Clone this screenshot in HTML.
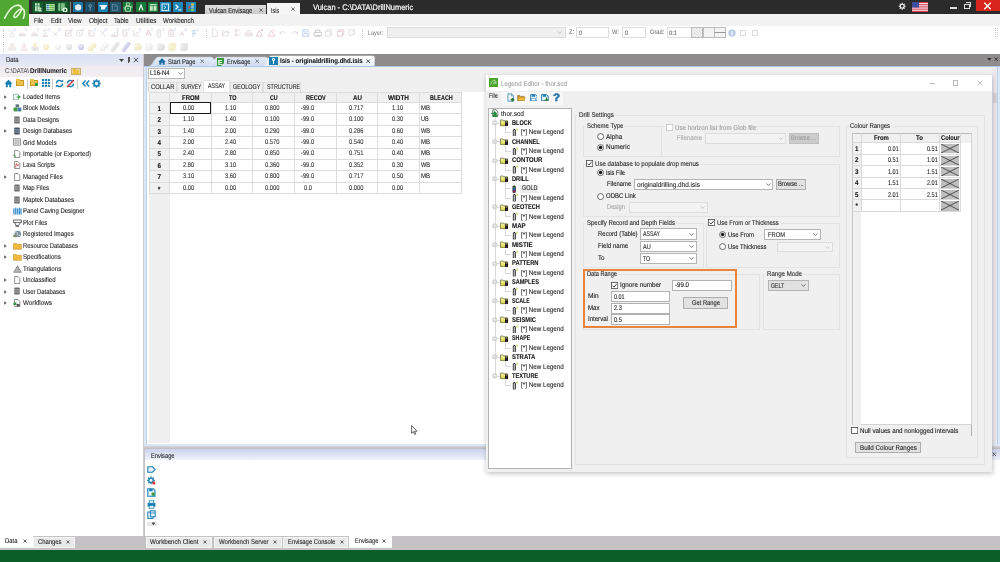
<!DOCTYPE html>
<html><head><meta charset="utf-8"><title>Vulcan - C:\DATA\DrillNumeric</title>
<style>
html,body{margin:0;padding:0;}
body{width:1000px;height:562px;overflow:hidden;background:#fff;position:relative;font-family:"Liberation Sans",sans-serif;font-size:6.2px;color:#222;text-rendering:geometricPrecision;}
div,svg{position:absolute;box-sizing:border-box;}
.t{white-space:nowrap;transform-origin:0 50%;-webkit-text-stroke:0.09px;}
#root{left:0;top:0;width:1000px;height:562px;overflow:hidden;will-change:transform;}
</style></head><body><div id="root">

<div style="left:0px;top:0px;width:1000px;height:14.3px;background:#2b2b2b;"></div>
<div style="left:0px;top:0px;width:28.8px;height:25.6px;background:#50a832;"></div>
<svg style="left:0px;top:0px;" width="29" height="26" viewBox="0 0 29 26"><path d="M4.6 18.2C8 11.2 13 5.4 17.4 5.2C20 5.1 21.4 6.6 22 8.4M23.4 18.3C25.2 13 24.8 8.8 21.8 8.8C18.8 8.8 13.9 14 13.9 16.5C13.9 17.9 15.5 17.8 17 16.4C19 14.5 20.9 11.8 21.5 9.8" fill="none" stroke="#e2fad6" stroke-width="1.65" stroke-linecap="round" stroke-linejoin="round"/></svg>
<div style="left:31.5px;top:1px;width:38px;height:12px;background:#124a26;"></div>
<div style="left:33px;top:1.6px;width:10.4px;height:10.6px;background:#155c2e;"></div>
<svg style="left:33px;top:1.6px;" width="10.4" height="10.6" viewBox="0 0 10.4 10.6"><rect x="2" y="1.2" width="4.6" height="8" fill="#bfe6c0"/><path d="M4.3 1.2v8M2 3.8h4.6" stroke="#155c2e" stroke-width=".6"/><circle cx="7.3" cy="6.6" r="1.2" fill="#bfe6c0"/><path d="M5.6 9.6c0-2 3.4-2 3.4 0z" fill="#bfe6c0"/></svg>
<div style="left:44.6px;top:1.6px;width:10.4px;height:10.6px;background:#155c2e;"></div>
<svg style="left:44.6px;top:1.6px;" width="10.4" height="10.6" viewBox="0 0 10.4 10.6"><rect x="1.2" y="2" width="8.4" height="6.8" fill="#d6f0d0"/><g fill="#2f78b8"><rect x="1.8" y="2.6" width="2" height="1.5"/><rect x="1.8" y="4.7" width="2" height="1.5"/><rect x="1.8" y="6.8" width="2" height="1.5"/></g><g fill="#6cc04a"><rect x="4.4" y="2.6" width="4.6" height="1.5"/><rect x="4.4" y="4.7" width="4.6" height="1.5"/><rect x="4.4" y="6.8" width="4.6" height="1.5"/></g></svg>
<div style="left:57px;top:1.6px;width:11.4px;height:10.6px;background:#155c2e;"></div>
<svg style="left:57px;top:1.6px;" width="11.4" height="10.6" viewBox="0 0 11.4 10.6"><rect x="1.2" y="1.2" width="6.6" height="7.6" fill="#7fbf8a"/><path d="M3.6 1.2v7.6" stroke="#155c2e" stroke-width=".6"/><circle cx="8" cy="8" r="1.9" fill="none" stroke="#e8f6e8" stroke-width="1.3"/></svg>
<div style="left:70px;top:2px;width:0.8px;height:10.5px;background:#8a8a8a;"></div>
<div style="left:72.7px;top:1.6px;width:10.4px;height:10.6px;background:#1a78a6;"></div>
<svg style="left:72.7px;top:1.6px;" width="10.4" height="10.6" viewBox="0 0 10.4 10.6"><path d="M5.2 2.2L8.2 3.6v3.6L5.2 8.8L2.2 7.2V3.6z" fill="#f0f4f6"/><path d="M2.2 3.6L5.2 5.2L8.2 3.6M5.2 5.2v3.6" stroke="#b9c6cf" stroke-width=".5" fill="none"/></svg>
<div style="left:85px;top:1.6px;width:10.4px;height:10.6px;background:#1d4f68;"></div>
<svg style="left:85px;top:1.6px;" width="10.4" height="10.6" viewBox="0 0 10.4 10.6"><circle cx="5.2" cy="3.8" r="1.3" fill="none" stroke="#7fa6ba" stroke-width=".8"/><path d="M5.2 5v3.6" stroke="#7fa6ba" stroke-width=".9"/></svg>
<div style="left:97.6px;top:1.6px;width:10.4px;height:10.6px;background:#1882b4;"></div>
<svg style="left:97.6px;top:1.6px;" width="10.4" height="10.6" viewBox="0 0 10.4 10.6"><path d="M1.6 3h7.4v1.6H8L6.6 7.4H3V4.6H1.6z" fill="#f4f8fa"/></svg>
<div style="left:110.4px;top:1.6px;width:10.4px;height:10.6px;background:#24566e;"></div>
<svg style="left:110.4px;top:1.6px;" width="10.4" height="10.6" viewBox="0 0 10.4 10.6"><path d="M2.4 2.4h3.2l1.8 1.8v4.2h-5z" fill="none" stroke="#6f93a6" stroke-width=".8"/><path d="M4.2 4.4h2.4" stroke="#6f93a6" stroke-width=".6"/></svg>
<div style="left:123px;top:1.6px;width:10.4px;height:10.6px;background:#177a38;"></div>
<svg style="left:123px;top:1.6px;" width="10.4" height="10.6" viewBox="0 0 10.4 10.6"><rect x="3.4" y="1" width="3.2" height="2.6" fill="none" stroke="#bfe6c0" stroke-width=".8"/><rect x="2.6" y="4.4" width="4.8" height="4.8" fill="none" stroke="#bfe6c0" stroke-width=".9"/><path d="M1.2 5v2.6M8.8 3.6v2.6M4 6.4h2" stroke="#bfe6c0" stroke-width=".8"/></svg>
<div style="left:135.5px;top:1.6px;width:10.4px;height:10.6px;background:#177a38;"></div>
<svg style="left:135.5px;top:1.6px;" width="10.4" height="10.6" viewBox="0 0 10.4 10.6"><path d="M3 8.4L5 3L7 8.4" fill="none" stroke="#fff" stroke-width="1.1"/></svg>
<div style="left:148px;top:1.6px;width:10.4px;height:10.6px;background:#177a38;"></div>
<svg style="left:148px;top:1.6px;" width="10.4" height="10.6" viewBox="0 0 10.4 10.6"><rect x="1.8" y="2" width="6.8" height="6.8" fill="#bfe6c0"/><path d="M5.2 3.4v5.4M1.8 3.6h6.8" stroke="#177a38" stroke-width=".7"/></svg>
<div style="left:160.2px;top:1.6px;width:10.6px;height:10.6px;background:#1d86b8;"></div>
<svg style="left:160.2px;top:1.6px;" width="10.6" height="10.6" viewBox="0 0 10.6 10.6"><rect x="2" y="2" width="6.6" height="6.6" fill="none" stroke="#f2f8fb" stroke-width=".9"/><path d="M4 3.8L5.8 5.3L4 6.8" fill="none" stroke="#f2f8fb" stroke-width=".8"/></svg>
<div style="left:173px;top:1.6px;width:10.4px;height:10.6px;background:#1d86b8;"></div>
<svg style="left:173px;top:1.6px;" width="10.4" height="10.6" viewBox="0 0 10.4 10.6"><path d="M2.6 2.8L5 5L2.6 7.2" fill="none" stroke="#fff" stroke-width="1.2"/><path d="M5.4 8h3" stroke="#fff" stroke-width="1"/></svg>
<div style="left:185.5px;top:1.6px;width:10.4px;height:10.6px;background:#1d86b8;"></div>
<svg style="left:185.5px;top:1.6px;" width="10.4" height="10.6" viewBox="0 0 10.4 10.6"><g><rect x="2.4" y="1.4" width="2.2" height="2.2" fill="#3e7fc4"/><rect x="5.2" y="1.4" width="2.6" height="2.2" fill="#e8c64a"/><rect x="2.4" y="4.2" width="2.2" height="2.2" fill="#d2504a"/><rect x="5.2" y="4.2" width="2.6" height="2.2" fill="#8fc7e0"/><rect x="2.4" y="7" width="2.2" height="2.2" fill="#3e9a52"/><rect x="5.2" y="7" width="2.6" height="2.2" fill="#7cc47a"/></g></svg>
<div style="left:204.7px;top:5px;width:61.8px;height:9.3px;background:linear-gradient(#dedede,#cbcbcb);"></div>
<div class="t" style="left:208.8px;top:6.10px;height:10px;line-height:10px;font-size:7.22px;color:#222;transform:scaleX(0.8072);">Vulcan Envisage</div>
<svg style="left:259.09999999999997px;top:7.9px;" width="4.2" height="4.2" viewBox="0 0 4.2 4.2"><path d="M0.5 0.5L3.7 3.7M3.7 0.5L0.5 3.7" stroke="#555" stroke-width="0.9"/></svg>
<div style="left:267px;top:3.2px;width:32.6px;height:11.1px;background:#f6f6f6;"></div>
<div class="t" style="left:270.9px;top:5.50px;height:10px;line-height:10px;font-size:7.22px;color:#222;transform:scaleX(0.7481);">Isis</div>
<svg style="left:291.29999999999995px;top:7.200000000000001px;" width="4.2" height="4.2" viewBox="0 0 4.2 4.2"><path d="M0.5 0.5L3.7 3.7M3.7 0.5L0.5 3.7" stroke="#555" stroke-width="0.9"/></svg>
<div class="t" style="left:312.8px;top:2.80px;height:10px;line-height:10px;font-size:8.1px;color:#f6f6f6;-webkit-text-stroke:0.22px #f6f6f6;transform:scaleX(0.9219);">Vulcan - C:\DATA\DrillNumeric</div>
<svg style="left:897.6px;top:2.2px;" width="8.4" height="8.4" viewBox="0 0 9 9"><circle cx="4.5" cy="4.5" r="2.1" fill="none" stroke="#f4f4f4" stroke-width="1.3"/><g stroke="#f4f4f4" stroke-width="1.2"><path d="M4.5 0.8v1.3M4.5 6.9v1.3M0.8 4.5h1.3M6.9 4.5h1.3M1.9 1.9l.9.9M6.2 6.2l.9.9M1.9 7.1l.9-.9M6.2 2.8l.9-.9"/></g></svg>
<svg style="left:912px;top:1.8px;" width="16" height="10" viewBox="0 0 16 10"><rect width="16" height="10" fill="#f4f4f4"/><g fill="#d8384a"><rect y="0" width="16" height="1.1"/><rect y="2.2" width="16" height="1.1"/><rect y="4.4" width="16" height="1.1"/><rect y="6.6" width="16" height="1.1"/><rect y="8.8" width="16" height="1.2"/></g><rect width="7" height="5.5" fill="#3b4f9c"/></svg>
<div style="left:949.5px;top:7.3px;width:7.2px;height:1.6px;background:#ddd;"></div>
<div style="left:964px;top:3.8px;width:5.5px;height:5px;border:1px solid #ddd;"></div>
<div style="left:965.8px;top:2.3px;width:5.5px;height:5px;border:1px solid #ddd;border-left:none;border-bottom:none;"></div>
<div style="left:975.5px;top:0px;width:24.5px;height:10.5px;background:#d9261c;"></div>
<svg style="left:983px;top:1.5px;" width="9" height="8" viewBox="0 0 9 8"><path d="M1.3 0.8L7.7 7.2M7.7 0.8L1.3 7.2" stroke="#fff" stroke-width="1.3"/></svg>
<div style="left:28.8px;top:14.2px;width:971.2px;height:11.4px;background:#f2f2f2;"></div>
<div class="t" style="left:33.75px;top:16.30px;height:10px;line-height:10px;font-size:7.22px;color:#1a1a1a;transform:scaleX(0.8032);">File</div>
<div class="t" style="left:50.6px;top:16.30px;height:10px;line-height:10px;font-size:7.22px;color:#1a1a1a;transform:scaleX(0.8351);">Edit</div>
<div class="t" style="left:68px;top:16.30px;height:10px;line-height:10px;font-size:7.22px;color:#1a1a1a;transform:scaleX(0.8692);">View</div>
<div class="t" style="left:88.5px;top:16.30px;height:10px;line-height:10px;font-size:7.22px;color:#1a1a1a;transform:scaleX(0.8862);">Object</div>
<div class="t" style="left:113.8px;top:16.30px;height:10px;line-height:10px;font-size:7.22px;color:#1a1a1a;transform:scaleX(0.8456);">Table</div>
<div class="t" style="left:135.5px;top:16.30px;height:10px;line-height:10px;font-size:7.22px;color:#1a1a1a;transform:scaleX(0.8811);">Utilities</div>
<div class="t" style="left:163px;top:16.30px;height:10px;line-height:10px;font-size:7.22px;color:#1a1a1a;transform:scaleX(0.8519);">Workbench</div>
<div style="left:0px;top:26px;width:1000px;height:28px;background:#fff;"></div>
<div style="left:3px;top:28.5px;width:1px;height:1px;background:#bdbdbd;"></div>
<div style="left:3px;top:30.7px;width:1px;height:1px;background:#bdbdbd;"></div>
<div style="left:3px;top:32.9px;width:1px;height:1px;background:#bdbdbd;"></div>
<div style="left:3px;top:35.1px;width:1px;height:1px;background:#bdbdbd;"></div>
<div style="left:3px;top:37.3px;width:1px;height:1px;background:#bdbdbd;"></div>
<div style="left:3px;top:42.0px;width:1px;height:1px;background:#bdbdbd;"></div>
<div style="left:3px;top:44.2px;width:1px;height:1px;background:#bdbdbd;"></div>
<div style="left:3px;top:46.4px;width:1px;height:1px;background:#bdbdbd;"></div>
<div style="left:3px;top:48.6px;width:1px;height:1px;background:#bdbdbd;"></div>
<div style="left:3px;top:50.8px;width:1px;height:1px;background:#bdbdbd;"></div>
<svg style="left:6.8px;top:28.0px;" width="9.6" height="9.2" viewBox="0 0 9.6 9.2"><g fill="none" stroke="#e1d5dc" stroke-width=".8"><path d="M1.5 1.5L7 7.5M7 2L2 7.8M3 8.6h3.6"/></g><circle cx="8" cy="1.6" r="1.2" fill="none" stroke="#d3d8f0" stroke-width=".6"/></svg>
<svg style="left:18.22px;top:28.0px;" width="9.6" height="9.2" viewBox="0 0 9.6 9.2"><g fill="none" stroke="#e1d5dc" stroke-width=".8"><path d="M1 7.8h7M2 7.8V5.6M4 7.8V4.6M6 7.8V5.6M1 6.4h7"/></g><circle cx="8" cy="1.6" r="1.2" fill="none" stroke="#d3d8f0" stroke-width=".6"/></svg>
<svg style="left:29.639999999999997px;top:28.0px;" width="9.6" height="9.2" viewBox="0 0 9.6 9.2"><g fill="none" stroke="#e1d5dc" stroke-width=".8"><path d="M1 7.8h7M1.5 6.4L4 4.2L6.6 6.4M1 6.6h7"/></g><circle cx="8" cy="1.6" r="1.2" fill="none" stroke="#d3d8f0" stroke-width=".6"/></svg>
<svg style="left:41.06px;top:28.0px;" width="9.6" height="9.2" viewBox="0 0 9.6 9.2"><g fill="none" stroke="#e1d5dc" stroke-width=".8"><path d="M6.4 2.2H2.4L4.6 4.8L2.4 7.4H6.6M1.6 8.6h5.6"/></g><circle cx="8" cy="1.6" r="1.2" fill="none" stroke="#d3d8f0" stroke-width=".6"/></svg>
<svg style="left:52.480000000000004px;top:28.0px;" width="9.6" height="9.2" viewBox="0 0 9.6 9.2"><g fill="none" stroke="#e1d5dc" stroke-width=".8"><path d="M1.6 4L5 8M5 4L1.6 8M5.8 3.4L7 2.2"/></g><circle cx="8" cy="1.6" r="1.2" fill="none" stroke="#d3d8f0" stroke-width=".6"/></svg>
<svg style="left:63.900000000000006px;top:28.0px;" width="9.6" height="9.2" viewBox="0 0 9.6 9.2"><g fill="none" stroke="#e1d5dc" stroke-width=".8"><rect x="1.6" y="2.6" width="5.4" height="5.4"/><path d="M1.6 8L7 2.6M3 5.4h2.6"/></g><circle cx="8" cy="1.6" r="1.2" fill="none" stroke="#d3d8f0" stroke-width=".6"/></svg>
<svg style="left:75.32px;top:28.0px;" width="9.6" height="9.2" viewBox="0 0 9.6 9.2"><g fill="none" stroke="#e1d5dc" stroke-width=".8"><circle cx="4.4" cy="5.2" r="3"/><circle cx="4.4" cy="5.2" r=".7"/><path d="M6.4 3L7.6 1.8"/></g><circle cx="8" cy="1.6" r="1.2" fill="none" stroke="#d3d8f0" stroke-width=".6"/></svg>
<svg style="left:86.74px;top:28.0px;" width="9.6" height="9.2" viewBox="0 0 9.6 9.2"><g fill="none" stroke="#e1d5dc" stroke-width=".8"><path d="M1.8 8V2.4C5.4 2.4 7.4 4.6 7.4 8zM1.8 5.2C3.8 5.2 4.8 6.2 4.8 8"/></g><circle cx="8" cy="1.6" r="1.2" fill="none" stroke="#d3d8f0" stroke-width=".6"/></svg>
<svg style="left:98.16px;top:28.0px;" width="9.6" height="9.2" viewBox="0 0 9.6 9.2"><g fill="none" stroke="#e1d5dc" stroke-width=".8"><path d="M1.4 2L7.6 8.4M7.6 2L3.4 6.4"/></g><circle cx="8" cy="1.6" r="1.2" fill="none" stroke="#d3d8f0" stroke-width=".6"/></svg>
<svg style="left:109.58px;top:28.0px;" width="9.6" height="9.2" viewBox="0 0 9.6 9.2"><g fill="none" stroke="#e1d5dc" stroke-width=".8"><path d="M1.2 8L7.4 3.2V8zM1.2 8h6.2M3 8.8h4"/></g><circle cx="8" cy="1.6" r="1.2" fill="none" stroke="#d3d8f0" stroke-width=".6"/></svg>
<svg style="left:121.0px;top:28.0px;" width="9.6" height="9.2" viewBox="0 0 9.6 9.2"><g fill="none" stroke="#e1d5dc" stroke-width=".8"><path d="M1.8 1.8h3.4v6.4H1.8zM3 3v.8M3 5v.8M6 4.4c1.2 0 1.6 1.2.4 2v1.2"/></g><circle cx="8" cy="1.6" r="1.2" fill="none" stroke="#d3d8f0" stroke-width=".6"/></svg>
<svg style="left:132.42px;top:28.0px;" width="9.6" height="9.2" viewBox="0 0 9.6 9.2"><g fill="none" stroke="#e1d5dc" stroke-width=".8"><path d="M1.8 1.8V8H7.6M3 6.6L4.4 4.4L5.4 6.2L7 3.6"/></g><circle cx="8" cy="1.6" r="1.2" fill="none" stroke="#d3d8f0" stroke-width=".6"/></svg>
<svg style="left:143.83999999999997px;top:28.0px;" width="9.6" height="9.2" viewBox="0 0 9.6 9.2"><g fill="none" stroke="#e1d5dc" stroke-width=".8"><path d="M1.6 8.2L4.4 1.8L7.2 8.2M2.6 6h3.6" stroke="#e2c2cc"/></g><circle cx="8" cy="1.6" r="1.2" fill="none" stroke="#d3d8f0" stroke-width=".6"/></svg>
<svg style="left:155.26px;top:28.0px;" width="9.6" height="9.2" viewBox="0 0 9.6 9.2"><g fill="none" stroke="#e1d5dc" stroke-width=".8"><path d="M2.2 1.8h3.2v6.6H2.2zM3.2 3.4h1.2M3.2 5h1.2"/></g><circle cx="8" cy="1.6" r="1.2" fill="none" stroke="#d3d8f0" stroke-width=".6"/></svg>
<svg style="left:166.67999999999998px;top:28.0px;" width="9.6" height="9.2" viewBox="0 0 9.6 9.2"><g fill="none" stroke="#e1d5dc" stroke-width=".8"><path d="M1.8 2.2h4.4v6.2H1.8zM2.8 3.8h2.4M2.8 5.2h2.4M2.8 6.6h2.4M2.6 1.6h2.8"/></g><circle cx="8" cy="1.6" r="1.2" fill="none" stroke="#d3d8f0" stroke-width=".6"/></svg>
<svg style="left:178.1px;top:28.0px;" width="9.6" height="9.2" viewBox="0 0 9.6 9.2"><g fill="none" stroke="#e1d5dc" stroke-width=".8"><path d="M2 8L4 3.6L6 8M2.8 6.4h2.4M6.6 3.2L7.6 2"/></g><circle cx="8" cy="1.6" r="1.2" fill="none" stroke="#d3d8f0" stroke-width=".6"/></svg>
<svg style="left:189.51999999999998px;top:28.0px;" width="9.6" height="9.2" viewBox="0 0 9.6 9.2"><g fill="none" stroke="#e1d5dc" stroke-width=".8"><path d="M3 8.4V2.8h3.8M3 5.4h3" stroke="#bdd0ea" stroke-width="1.1"/></g><circle cx="8" cy="1.6" r="1.2" fill="none" stroke="#d3d8f0" stroke-width=".6"/></svg>
<div style="left:205.6px;top:28.5px;width:1px;height:1px;background:#c9c9c9;"></div>
<div style="left:205.6px;top:30.7px;width:1px;height:1px;background:#c9c9c9;"></div>
<div style="left:205.6px;top:32.9px;width:1px;height:1px;background:#c9c9c9;"></div>
<div style="left:205.6px;top:35.1px;width:1px;height:1px;background:#c9c9c9;"></div>
<div style="left:205.6px;top:37.3px;width:1px;height:1px;background:#c9c9c9;"></div>
<svg style="left:209.6px;top:27.799999999999997px;" width="9.6" height="9.2" viewBox="0 0 9.6 9.2"><g fill="none" stroke="#e1d5dc" stroke-width=".8"><path d="M2.4 1.2h3l1.8 1.8v5.6H2.4z"/></g></svg>
<svg style="left:221.04999999999998px;top:27.799999999999997px;" width="9.6" height="9.2" viewBox="0 0 9.6 9.2"><g fill="none" stroke="#e1d5dc" stroke-width=".8"><path d="M1.2 8V2.6h2.4l.8.9h3v1.3M1.2 8L2.8 4.8h5.6L6.8 8z"/></g></svg>
<svg style="left:232.5px;top:27.799999999999997px;" width="9.6" height="9.2" viewBox="0 0 9.6 9.2"><g fill="none" stroke="#e1d5dc" stroke-width=".8"><path d="M2 1.4h2.2v2H2zM2 6h2.2v2H2zM3 3.4V6M5.6 2.4h1.6M5.6 7h1.6M7.2 4.2v1.4"/></g></svg>
<svg style="left:243.95px;top:27.799999999999997px;" width="9.6" height="9.2" viewBox="0 0 9.6 9.2"><g fill="none" stroke="#e1d5dc" stroke-width=".8"><path d="M1.2 5.2h7v2.8h-7zM2.4 5.2L3.4 2.8h3.2l.6 2.4M1.2 6.6h7"/></g></svg>
<svg style="left:255.39999999999998px;top:27.799999999999997px;" width="9.6" height="9.2" viewBox="0 0 9.6 9.2"><g fill="none" stroke="#e4c4cc" stroke-width=".8"><path d="M1.2 8.2L4.4 2.4L7.6 8.2z"/><path d="M6 1L8 3M8 1L6 3" stroke="#e8b9bf"/></g></svg>
<svg style="left:266.84999999999997px;top:27.799999999999997px;" width="9.6" height="9.2" viewBox="0 0 9.6 9.2"><g fill="none" stroke="#e4c4cc" stroke-width=".8"><path d="M1.2 8.2L4.4 2.4L7.6 8.2z"/><path d="M7 1.4v1.8" stroke="#e8b9bf"/></g></svg>
<svg style="left:278.3px;top:27.799999999999997px;" width="9.6" height="9.2" viewBox="0 0 9.6 9.2"><g fill="none" stroke="#e1d5dc" stroke-width=".8"><path d="M2 5.6C2.4 3 6.4 2.6 7.4 5.8M2 5.6V3.4M2 5.6h2.2"/></g></svg>
<svg style="left:289.75px;top:27.799999999999997px;" width="9.6" height="9.2" viewBox="0 0 9.6 9.2"><g fill="none" stroke="#e1d5dc" stroke-width=".8"><path d="M7.4 5.6C7 3 3 2.6 2 5.8M7.4 5.6V3.4M7.4 5.6H5.2"/></g></svg>
<svg style="left:301.2px;top:27.799999999999997px;" width="9.6" height="9.2" viewBox="0 0 9.6 9.2"><g fill="none" stroke="#c3d0ea" stroke-width=".8"><path d="M1.6 1.6h5.2l1 1v5.8H1.6zM3 1.6v2.4h3V1.6M2.8 8.4V5.6h3.6v2.8" stroke="#c3d0ea" stroke-width=".8"/></g></svg>
<svg style="left:312.65px;top:27.799999999999997px;" width="9.6" height="9.2" viewBox="0 0 9.6 9.2"><g fill="none" stroke="#ccc" stroke-width=".8"><path d="M1 4.4h7.6v3h-7.6zM2.6 4.4V2.2h4.4v2.2M2.6 7.4v1.2h4.4V7.4" stroke="#cdcdcd" stroke-width="1"/></g></svg>
<svg style="left:324.09999999999997px;top:27.799999999999997px;" width="9.6" height="9.2" viewBox="0 0 9.6 9.2"><g fill="none" stroke="#e1d5dc" stroke-width=".8"><path d="M1.4 3.4h4.8v4.8H1.4zM3 3.4V1.8h4.8v4.8H6.2"/></g></svg>
<svg style="left:335.55px;top:27.799999999999997px;" width="9.6" height="9.2" viewBox="0 0 9.6 9.2"><g fill="none" stroke="#e1d5dc" stroke-width=".8"><path d="M1.4 3.4h4.8v4.8H1.4zM3 3.4V1.8h4.8v4.8H6.2" stroke="#e0c4cc"/></g></svg>
<svg style="left:346.99999999999994px;top:27.799999999999997px;" width="9.6" height="9.2" viewBox="0 0 9.6 9.2"><g fill="none" stroke="#e1d5dc" stroke-width=".8"><path d="M1.8 1.6h5.6v5H5L3.6 8.2V6.6H1.8zM4.6 2.8c1.2 0 1.2 1.2 0 1.8v.6"/></g></svg>
<div style="left:362px;top:28.5px;width:1px;height:1px;background:#c9c9c9;"></div>
<div style="left:362px;top:30.7px;width:1px;height:1px;background:#c9c9c9;"></div>
<div style="left:362px;top:32.9px;width:1px;height:1px;background:#c9c9c9;"></div>
<div style="left:362px;top:35.1px;width:1px;height:1px;background:#c9c9c9;"></div>
<div style="left:362px;top:37.3px;width:1px;height:1px;background:#c9c9c9;"></div>
<div class="t" style="left:368.4px;top:28.50px;height:10px;line-height:10px;font-size:6.66px;color:#8f8a92;transform:scaleX(0.8216);">Layer:</div>
<div style="left:387px;top:27px;width:178.5px;height:10.5px;background:#efefef;border:1px solid #dcdcdc;"></div>
<svg style="left:557px;top:31px;" width="5" height="3" viewBox="0 0 5 3"><path d="M0.5 0.5L2.5 2.3L4.5 0.5" stroke="#aaa" fill="none" stroke-width=".7"/></svg>
<div class="t" style="left:569.3px;top:28.40px;height:10px;line-height:10px;font-size:6.44px;color:#777;transform:scaleX(0.885);transform-origin:0 50%;">Z:</div>
<div style="left:576px;top:27px;width:33px;height:10.5px;background:#fff;border:1px solid #ddd;"></div>
<div class="t" style="left:578.5px;top:28.60px;height:10px;line-height:10px;font-size:6.44px;color:#666;transform:scaleX(0.885);transform-origin:0 50%;">0</div>
<div class="t" style="left:612px;top:28.40px;height:10px;line-height:10px;font-size:6.44px;color:#777;transform:scaleX(0.885);transform-origin:0 50%;">W:</div>
<div style="left:622px;top:27px;width:24px;height:10.5px;background:#fff;border:1px solid #ddd;"></div>
<div class="t" style="left:624.5px;top:28.60px;height:10px;line-height:10px;font-size:6.44px;color:#666;transform:scaleX(0.885);transform-origin:0 50%;">0</div>
<div class="t" style="left:650px;top:28.40px;height:10px;line-height:10px;font-size:6.44px;color:#777;transform:scaleX(0.885);transform-origin:0 50%;">Grad:</div>
<div style="left:667px;top:27px;width:24.5px;height:10.5px;background:#fff;border:1px solid #ddd;"></div>
<div class="t" style="left:669px;top:28.60px;height:10px;line-height:10px;font-size:6.44px;color:#666;transform:scaleX(0.885);transform-origin:0 50%;">0:1</div>
<div style="left:691px;top:27px;width:12px;height:10.5px;background:repeating-linear-gradient(45deg,#d9d9d9 0 1px,#f2f2f2 1px 2.2px);border:1px solid #bbb;"></div>
<div style="left:702.5px;top:27px;width:12px;height:10.5px;background:#f4f4f4;border:1px solid #bbb;"></div>
<div style="left:714px;top:27px;width:12px;height:10.5px;background:#f4f4f4;border:1px solid #bbb;"></div>
<div style="left:714px;top:32px;width:12px;height:0.8px;background:#999;"></div>
<svg style="left:728px;top:28.5px;" width="8" height="8" viewBox="0 0 8 8"><circle cx="4" cy="4" r="3.7" fill="#b9cbe6"/><rect x="3.4" y="3.2" width="1.2" height="3" fill="#fff"/><rect x="3.4" y="1.6" width="1.2" height="1.1" fill="#fff"/></svg>
<div style="left:740px;top:29.5px;width:6px;height:6px;border:1px solid #e2d9de;"></div>
<div style="left:751.5px;top:29.5px;width:6px;height:6px;border:1px solid #e2d9de;"></div>
<div style="left:995px;top:28px;width:1px;height:1px;background:#ccc;"></div>
<div style="left:997px;top:28px;width:1px;height:1px;background:#ccc;"></div>
<div style="left:995px;top:30px;width:1px;height:1px;background:#ccc;"></div>
<div style="left:997px;top:30px;width:1px;height:1px;background:#ccc;"></div>
<div style="left:995px;top:32px;width:1px;height:1px;background:#ccc;"></div>
<div style="left:997px;top:32px;width:1px;height:1px;background:#ccc;"></div>
<div style="left:995px;top:34px;width:1px;height:1px;background:#ccc;"></div>
<div style="left:997px;top:34px;width:1px;height:1px;background:#ccc;"></div>
<div style="left:995px;top:36px;width:1px;height:1px;background:#ccc;"></div>
<div style="left:997px;top:36px;width:1px;height:1px;background:#ccc;"></div>
<svg style="left:7px;top:41.5px;opacity:.72;" width="10" height="10" viewBox="0 0 10 10"><radialGradient id="a1" cx=".38" cy=".32" r=".75"><stop offset="0" stop-color="#f6f2ee"/><stop offset="1" stop-color="#d9d0cc"/></radialGradient><circle cx="5" cy="3" r="2.2" fill="url(#a1)"/><radialGradient id="a2" cx=".38" cy=".32" r=".75"><stop offset="0" stop-color="#f6f2ee"/><stop offset="1" stop-color="#d9d0cc"/></radialGradient><circle cx="3" cy="6.6" r="2.2" fill="url(#a2)"/><radialGradient id="a3" cx=".38" cy=".32" r=".75"><stop offset="0" stop-color="#f6f2ee"/><stop offset="1" stop-color="#d9d0cc"/></radialGradient><circle cx="7" cy="6.6" r="2.2" fill="url(#a3)"/></svg>
<svg style="left:18.6px;top:41.5px;opacity:.72;" width="10" height="10" viewBox="0 0 10 10"><path d="M5 1L8.6 8.6H1.4z" fill="#f6ecee" stroke="#e6d2d8" stroke-width=".6"/><path d="M5 1v7.6" stroke="#e6d2d8" stroke-width=".5"/></svg>
<svg style="left:30px;top:41.5px;opacity:.72;" width="10" height="10" viewBox="0 0 10 10"><rect x="1.4" y="4.6" width="7.4" height="4.2" fill="#e6e0e2"/><rect x="3.2" y="1" width="3.6" height="4" fill="#f3ecc4"/><rect x="4" y="5.8" width="2" height="3" fill="#d6cfd3"/></svg>
<svg style="left:41.4px;top:41.5px;opacity:.72;" width="10" height="10" viewBox="0 0 10 10"><radialGradient id="b0" cx=".38" cy=".32" r=".75"><stop offset="0" stop-color="#fbf7dc"/><stop offset="1" stop-color="#e9df9e"/></radialGradient><circle cx="5" cy="5" r="3.1" fill="url(#b0)"/></svg>
<svg style="left:53px;top:41.5px;opacity:.72;" width="10" height="10" viewBox="0 0 10 10"><radialGradient id="b1" cx=".38" cy=".32" r=".75"><stop offset="0" stop-color="#ffffff"/><stop offset="1" stop-color="#dcdae2"/></radialGradient><circle cx="5" cy="5" r="3.1" fill="url(#b1)"/></svg>
<svg style="left:64.4px;top:41.5px;opacity:.72;" width="10" height="10" viewBox="0 0 10 10"><radialGradient id="b2" cx=".38" cy=".32" r=".75"><stop offset="0" stop-color="#f0f0f0"/><stop offset="1" stop-color="#c9c9cc"/></radialGradient><circle cx="5" cy="5" r="3.1" fill="url(#b2)"/></svg>
<svg style="left:75.6px;top:41.5px;opacity:.72;" width="10" height="10" viewBox="0 0 10 10"><radialGradient id="b3" cx=".38" cy=".32" r=".75"><stop offset="0" stop-color="#e2e2f6"/><stop offset="1" stop-color="#a9a9dc"/></radialGradient><circle cx="5" cy="5" r="3.1" fill="url(#b3)"/></svg>
<svg style="left:87px;top:41.5px;opacity:.72;" width="10" height="10" viewBox="0 0 10 10"><radialGradient id="c0a" cx=".38" cy=".32" r=".75"><stop offset="0" stop-color="#fbf7dc"/><stop offset="1" stop-color="#e9df9e"/></radialGradient><circle cx="6.6" cy="3.4" r="2.7" fill="url(#c0a)"/><radialGradient id="c0b" cx=".38" cy=".32" r=".75"><stop offset="0" stop-color="#fbf7dc"/><stop offset="1" stop-color="#e9df9e"/></radialGradient><circle cx="3.6" cy="6.4" r="2.9" fill="url(#c0b)"/></svg>
<svg style="left:98.6px;top:41.5px;opacity:.72;" width="10" height="10" viewBox="0 0 10 10"><radialGradient id="c1a" cx=".38" cy=".32" r=".75"><stop offset="0" stop-color="#ffffff"/><stop offset="1" stop-color="#dcdae2"/></radialGradient><circle cx="6.6" cy="3.4" r="2.7" fill="url(#c1a)"/><radialGradient id="c1b" cx=".38" cy=".32" r=".75"><stop offset="0" stop-color="#ffffff"/><stop offset="1" stop-color="#dcdae2"/></radialGradient><circle cx="3.6" cy="6.4" r="2.9" fill="url(#c1b)"/></svg>
<svg style="left:110px;top:41.5px;opacity:.72;" width="10" height="10" viewBox="0 0 10 10"><linearGradient id="d0" x1="0" y1="0" x2="1" y2="1"><stop offset="0" stop-color="#f0f0f0"/><stop offset="1" stop-color="#c9c9cc"/></linearGradient><path d="M2.6 8.2L7.4 1.8" stroke="url(#d0)" stroke-width="4.2" stroke-linecap="round"/></svg>
<svg style="left:121.4px;top:41.5px;opacity:.72;" width="10" height="10" viewBox="0 0 10 10"><linearGradient id="d1" x1="0" y1="0" x2="1" y2="1"><stop offset="0" stop-color="#e2e2f6"/><stop offset="1" stop-color="#a9a9dc"/></linearGradient><path d="M2.6 8.2L7.4 1.8" stroke="url(#d1)" stroke-width="4.2" stroke-linecap="round"/></svg>
<svg style="left:133px;top:41.5px;opacity:.72;" width="10" height="10" viewBox="0 0 10 10"><linearGradient id="e0" x1="0" y1="0" x2="1" y2="1"><stop offset="0" stop-color="#fbf7dc"/><stop offset="1" stop-color="#e9df9e"/></linearGradient><path d="M1.4 1.6h4.4c2 .4 3.2 2 3.2 3.6s-1.4 3.2-3.4 3.4H1.4z" fill="url(#e0)" stroke="#e0dcd8" stroke-width=".4"/></svg>
<svg style="left:144px;top:41.5px;opacity:.72;" width="10" height="10" viewBox="0 0 10 10"><linearGradient id="e1" x1="0" y1="0" x2="1" y2="1"><stop offset="0" stop-color="#ffffff"/><stop offset="1" stop-color="#dcdae2"/></linearGradient><path d="M1.4 1.6h4.4c2 .4 3.2 2 3.2 3.6s-1.4 3.2-3.4 3.4H1.4z" fill="url(#e1)" stroke="#e0dcd8" stroke-width=".4"/></svg>
<svg style="left:155.6px;top:41.5px;opacity:.72;" width="10" height="10" viewBox="0 0 10 10"><linearGradient id="e2" x1="0" y1="0" x2="1" y2="1"><stop offset="0" stop-color="#f0f0f0"/><stop offset="1" stop-color="#c9c9cc"/></linearGradient><path d="M1.4 1.6h4.4c2 .4 3.2 2 3.2 3.6s-1.4 3.2-3.4 3.4H1.4z" fill="url(#e2)" stroke="#e0dcd8" stroke-width=".4"/></svg>
<svg style="left:167px;top:41.5px;opacity:.72;" width="10" height="10" viewBox="0 0 10 10"><linearGradient id="f0" x1="0" y1="0" x2="1" y2="1"><stop offset="0" stop-color="#fbf7dc"/><stop offset="1" stop-color="#e9df9e"/></linearGradient><path d="M1.2 3h6v6h-6z" fill="url(#f0)"/><path d="M1.2 3L3 1.2h6L7.2 3zM7.2 3L9 1.2v6L7.2 9z" fill="#e9df9e" opacity=".75"/></svg>
<svg style="left:178.6px;top:41.5px;opacity:.72;" width="10" height="10" viewBox="0 0 10 10"><linearGradient id="f1" x1="0" y1="0" x2="1" y2="1"><stop offset="0" stop-color="#f0f0f0"/><stop offset="1" stop-color="#c9c9cc"/></linearGradient><path d="M1.2 3h6v6h-6z" fill="url(#f1)"/><path d="M1.2 3L3 1.2h6L7.2 3zM7.2 3L9 1.2v6L7.2 9z" fill="#c9c9cc" opacity=".75"/></svg>
<div style="left:0px;top:54px;width:142.7px;height:12px;background:linear-gradient(#d9e0f2,#e6eaf6);"></div>
<div class="t" style="left:6px;top:56.40px;height:10px;line-height:10px;font-size:6.99px;color:#222;transform:scaleX(0.8398);">Data</div>
<svg style="left:118.5px;top:58.5px;" width="5" height="3" viewBox="0 0 5 3"><path d="M0 0h5l-2.5 3z" fill="#444"/></svg>
<div style="left:127.5px;top:57px;width:2px;height:4.5px;border:0.8px solid #555;"></div>
<div style="left:128.2px;top:61.3px;width:0.7px;height:1.6px;background:#555;"></div>
<svg style="left:133px;top:57.2px;" width="6" height="6" viewBox="0 0 6 6"><path d="M0.8 0.8L5.2 5.2M5.2 0.8L0.8 5.2" stroke="#444" stroke-width=".9"/></svg>
<div style="left:0px;top:66px;width:142.7px;height:11px;background:linear-gradient(#eeeaee,#f3f0f2);"></div>
<div class="t" style="left:5.2px;top:67.30px;height:10px;line-height:10px;font-size:6.99px;color:#555;transform:scaleX(0.8430);">C:\DATA\</div>
<div class="t" style="left:29.8px;top:67.30px;height:10px;line-height:10px;font-size:6.99px;color:#222;font-weight:bold;transform:scaleX(0.8885);">DrillNumeric</div>
<div style="left:71.2px;top:67.6px;width:9.8px;height:7.4px;background:#e9d9a0;border:1px solid #c5b26a;"></div>
<div style="left:73px;top:70.2px;width:6px;height:3.6px;background:#f0bd3c;"></div>
<div style="left:73px;top:69.2px;width:2.6px;height:1.2px;background:#f0bd3c;"></div>
<div style="left:0px;top:77px;width:142.7px;height:459px;background:#fff;"></div>
<svg style="left:4px;top:78.5px;" width="9" height="9" viewBox="0 0 9 9"><path d="M4.5 0.8L0.5 4.5h1.3v3.7h2v-2.4h1.4v2.4h2V4.5h1.3z" fill="#1b7fb3"/></svg>
<div style="left:16px;top:80px;width:8px;height:6px;background:#eec14a;border:0.7px solid #c79a28;"></div>
<div style="left:16px;top:79px;width:3.5px;height:1.6px;background:#eec14a;"></div>
<div style="left:26.6px;top:78.5px;width:0.7px;height:10px;background:#ccc;"></div>
<div style="left:30px;top:80px;width:8px;height:6px;background:#eec14a;border:0.7px solid #c79a28;"></div>
<div style="left:30px;top:79px;width:3.5px;height:1.6px;background:#eec14a;"></div>
<div style="left:35px;top:83.2px;width:3.2px;height:3.2px;background:#3d9a42;"></div>
<svg style="left:41.5px;top:78.8px;" width="8" height="8" viewBox="0 0 8 8"><g fill="#1b7fb3"><rect x="0" y="0" width="2.1" height="2.1"/><rect x="2.9" y="0" width="2.1" height="2.1"/><rect x="5.8" y="0" width="2.1" height="2.1"/><rect x="0" y="2.9" width="2.1" height="2.1"/><rect x="2.9" y="2.9" width="2.1" height="2.1"/><rect x="5.8" y="2.9" width="2.1" height="2.1"/><rect x="0" y="5.8" width="2.1" height="2.1"/><rect x="2.9" y="5.8" width="2.1" height="2.1"/><rect x="5.8" y="5.8" width="2.1" height="2.1"/></g></svg>
<div style="left:52.3px;top:78.5px;width:0.7px;height:10px;background:#ccc;"></div>
<svg style="left:55px;top:78.8px;" width="9" height="9" viewBox="0 0 9 9"><path d="M1.4 4.5a3.1 3.1 0 0 1 5.6-1.8M7.6 4.5a3.1 3.1 0 0 1-5.6 1.8" fill="none" stroke="#1b7fb3" stroke-width="1.5"/><path d="M5.6 3.1h2.6V0.6zM3.4 5.9H0.8v2.5z" fill="#1b7fb3"/></svg>
<svg style="left:66px;top:78.8px;" width="9" height="9" viewBox="0 0 9 9"><path d="M1.4 4.5a3.1 3.1 0 0 1 5.6-1.8M7.6 4.5a3.1 3.1 0 0 1-5.6 1.8" fill="none" stroke="#1b7fb3" stroke-width="1.5"/><path d="M1 8L8 1" stroke="#d0323a" stroke-width="1.3"/></svg>
<div style="left:77.4px;top:78.5px;width:0.7px;height:10px;background:#ccc;"></div>
<svg style="left:81.5px;top:80px;" width="8" height="7" viewBox="0 0 8 7"><path d="M3.6 0.6L0.8 3.5L3.6 6.4M7.2 0.6L4.4 3.5L7.2 6.4" fill="none" stroke="#1b7fb3" stroke-width="1.4"/></svg>
<svg style="left:92px;top:78.8px;" width="9" height="9" viewBox="0 0 9 9"><circle cx="4.5" cy="4.5" r="2.4" fill="none" stroke="#1b7fb3" stroke-width="1.5"/><g stroke="#1b7fb3" stroke-width="1.5"><path d="M4.5 0.3v1.6M4.5 7.1v1.6M0.3 4.5h1.6M7.1 4.5h1.6M1.5 1.5l1.1 1.1M6.4 6.4l1.1 1.1M1.5 7.5l1.1-1.1M6.4 2.6l1.1-1.1"/></g></svg>
<svg style="left:4.2px;top:94.8px;" width="3" height="4" viewBox="0 0 3 4"><path d="M0.2 0.2L2.6 2L0.2 3.8z" fill="#555"/></svg>
<svg style="left:12.8px;top:92.6px;" width="9" height="8" viewBox="0 0 9 8"><rect x="0.5" y="1.2" width="5" height="5.6" fill="#eef3f2" stroke="#8aa" stroke-width=".7"/><path d="M3.5 4h3.2M5.4 2.4L7.4 4L5.4 5.6" fill="#3d9a42" stroke="#3d9a42" stroke-width=".9"/></svg>
<div class="t" style="left:23px;top:92.70px;height:10px;line-height:10px;font-size:6.99px;color:#222;transform:scaleX(0.8741);">Loaded Items</div>
<svg style="left:4.2px;top:106.25999999999999px;" width="3" height="4" viewBox="0 0 3 4"><path d="M0.2 0.2L2.6 2L0.2 3.8z" fill="#555"/></svg>
<svg style="left:12.8px;top:104.05999999999999px;" width="9" height="8" viewBox="0 0 9 8"><rect x="2.6" y="0.4" width="3.4" height="3" fill="#5c6f7e"/><rect x="0.6" y="3.6" width="3.8" height="3.8" fill="#3d9a42"/><rect x="4.6" y="3.6" width="3.8" height="3.8" fill="#4a7ea6"/></svg>
<div class="t" style="left:23px;top:104.16px;height:10px;line-height:10px;font-size:6.99px;color:#222;transform:scaleX(0.8785);">Block Models</div>
<svg style="left:12.8px;top:115.52px;" width="8" height="8" viewBox="0 0 8 8"><rect x="1.2" y="0.6" width="5.6" height="7" rx="1.2" fill="#6e6e6e"/><path d="M1.2 2.9h5.6M1.2 5.1h5.6" stroke="#ddd" stroke-width=".6"/></svg>
<div class="t" style="left:23px;top:115.62px;height:10px;line-height:10px;font-size:6.99px;color:#222;transform:scaleX(0.8584);">Data Designs</div>
<svg style="left:4.2px;top:129.18px;" width="3" height="4" viewBox="0 0 3 4"><path d="M0.2 0.2L2.6 2L0.2 3.8z" fill="#555"/></svg>
<svg style="left:12.8px;top:126.98px;" width="8" height="8" viewBox="0 0 8 8"><rect x="1.2" y="0.6" width="5.6" height="7" rx="1.2" fill="#3e5466"/><path d="M1.2 2.9h5.6M1.2 5.1h5.6" stroke="#ddd" stroke-width=".6"/></svg>
<div class="t" style="left:23px;top:127.08px;height:10px;line-height:10px;font-size:6.99px;color:#222;transform:scaleX(0.8585);">Design Databases</div>
<svg style="left:12.8px;top:138.44px;" width="8" height="8" viewBox="0 0 8 8"><rect x="0.6" y="0.8" width="6.8" height="6.4" fill="#f1f1f1" stroke="#777" stroke-width=".7"/><path d="M0.6 3h6.8M0.6 5.1h6.8M2.9 0.8v6.4M5.1 0.8v6.4" stroke="#888" stroke-width=".5"/></svg>
<div class="t" style="left:23px;top:138.54px;height:10px;line-height:10px;font-size:6.99px;color:#222;transform:scaleX(0.8896);">Grid Models</div>
<svg style="left:12.8px;top:149.9px;" width="8" height="8" viewBox="0 0 8 8"><path d="M1.6 0.5h3.4l1.8 1.8v5.2H1.6z" fill="#fff" stroke="#666" stroke-width=".7"/><path d="M0.6 5.6L2.4 7.4L2.6 5.2z" fill="#3d9a42"/><path d="M1 4.2a2.2 2.2 0 0 0 1.2 2.4" stroke="#3d9a42" fill="none" stroke-width=".8"/></svg>
<div class="t" style="left:23px;top:150.00px;height:10px;line-height:10px;font-size:6.99px;color:#222;transform:scaleX(0.8982);">Importable (or Exported)</div>
<svg style="left:12.8px;top:161.36px;" width="8" height="8" viewBox="0 0 8 8"><path d="M1.6 0.5h3.4l1.8 1.8v5.2H1.6z" fill="#fff" stroke="#666" stroke-width=".7"/><path d="M2.6 6.4L3.4 2.6L5 4.8L5.6 3.4" stroke="#c8323a" fill="none" stroke-width=".8"/></svg>
<div class="t" style="left:23px;top:161.46px;height:10px;line-height:10px;font-size:6.99px;color:#222;transform:scaleX(0.8325);">Lava Scripts</div>
<svg style="left:4.2px;top:175.01999999999998px;" width="3" height="4" viewBox="0 0 3 4"><path d="M0.2 0.2L2.6 2L0.2 3.8z" fill="#555"/></svg>
<svg style="left:12.8px;top:172.82px;" width="8" height="8" viewBox="0 0 8 8"><path d="M1.6 0.5h3.4l1.8 1.8v5.2H1.6z" fill="#fff" stroke="#666" stroke-width=".7"/></svg>
<div class="t" style="left:23px;top:172.92px;height:10px;line-height:10px;font-size:6.99px;color:#222;transform:scaleX(0.8677);">Managed Files</div>
<svg style="left:12.8px;top:184.28000000000003px;" width="8" height="8" viewBox="0 0 8 8"><rect x="1.2" y="0.6" width="5.6" height="7" rx="1.2" fill="#6e6e6e"/><path d="M1.2 2.9h5.6M1.2 5.1h5.6" stroke="#ddd" stroke-width=".6"/></svg>
<div class="t" style="left:23px;top:184.38px;height:10px;line-height:10px;font-size:6.99px;color:#222;transform:scaleX(0.8586);">Map Files</div>
<svg style="left:12.8px;top:195.74px;" width="8" height="8" viewBox="0 0 8 8"><rect x="1.2" y="0.6" width="5.6" height="7" rx="1.2" fill="#6e6e6e"/><path d="M1.2 2.9h5.6M1.2 5.1h5.6" stroke="#ddd" stroke-width=".6"/></svg>
<div class="t" style="left:23px;top:195.84px;height:10px;line-height:10px;font-size:6.99px;color:#222;transform:scaleX(0.8755);">Maptek Databases</div>
<svg style="left:12.8px;top:207.20000000000002px;" width="9" height="8" viewBox="0 0 9 8"><g fill="#3c8fd0"><rect x="0.3" y="1.5" width="1.3" height="6"/><rect x="2.1" y="0.6" width="1.3" height="6.9"/><rect x="3.9" y="1.5" width="1.3" height="6"/><rect x="5.7" y="0.6" width="1.3" height="6.9"/><rect x="7.4" y="1.5" width="1.3" height="6"/></g></svg>
<div class="t" style="left:23px;top:207.30px;height:10px;line-height:10px;font-size:6.99px;color:#222;transform:scaleX(0.8609);">Panel Caving Designer</div>
<svg style="left:12.8px;top:218.66000000000003px;" width="9" height="8" viewBox="0 0 9 8"><path d="M0.6 1h7.8v2.6H0.6z" fill="#fff" stroke="#444" stroke-width=".8"/><path d="M1.8 3.6l1 2.8h3l1.6-2.8" fill="none" stroke="#444" stroke-width=".8"/><path d="M2.4 7.4h3.6" stroke="#444" stroke-width=".8"/></svg>
<div class="t" style="left:23px;top:218.76px;height:10px;line-height:10px;font-size:6.99px;color:#222;transform:scaleX(0.8439);">Plot Files</div>
<svg style="left:12.8px;top:230.12px;" width="9" height="8" viewBox="0 0 9 8"><circle cx="4.8" cy="4" r="3.3" fill="#7d93a8"/><path d="M2.4 2.4c1.4-.8 2.6.4 2 1.6c-.6 1 .8 1.6 2.4 1.2" stroke="#cfd9c4" fill="none" stroke-width="1"/><rect x="0.2" y="4.6" width="3.2" height="2.6" fill="#8a8f6a"/></svg>
<div class="t" style="left:23px;top:230.22px;height:10px;line-height:10px;font-size:6.99px;color:#222;transform:scaleX(0.8657);">Registered Images</div>
<svg style="left:4.2px;top:243.78000000000003px;" width="3" height="4" viewBox="0 0 3 4"><path d="M0.2 0.2L2.6 2L0.2 3.8z" fill="#555"/></svg>
<svg style="left:12.8px;top:241.58000000000004px;" width="9" height="8" viewBox="0 0 9 8"><path d="M0.5 1.4h2.8l.8.9h4.2v5H0.5z" fill="#f0b93a" stroke="#c4922a" stroke-width=".6"/></svg>
<div class="t" style="left:23px;top:241.68px;height:10px;line-height:10px;font-size:6.99px;color:#222;transform:scaleX(0.8431);">Resource Databases</div>
<svg style="left:4.2px;top:255.24px;" width="3" height="4" viewBox="0 0 3 4"><path d="M0.2 0.2L2.6 2L0.2 3.8z" fill="#555"/></svg>
<svg style="left:12.8px;top:253.04000000000002px;" width="9" height="8" viewBox="0 0 9 8"><path d="M0.5 1.4h2.8l.8.9h4.2v5H0.5z" fill="#f0b93a" stroke="#c4922a" stroke-width=".6"/></svg>
<div class="t" style="left:23px;top:253.14px;height:10px;line-height:10px;font-size:6.99px;color:#222;transform:scaleX(0.8760);">Specifications</div>
<svg style="left:12.8px;top:264.5px;" width="9" height="8" viewBox="0 0 9 8"><path d="M4.5 0.8L8.3 7.3H0.7z" fill="#b9b9b9" stroke="#777" stroke-width=".7"/><path d="M4.5 0.8L5.2 7.3" stroke="#888" stroke-width=".5"/></svg>
<div class="t" style="left:23px;top:264.60px;height:10px;line-height:10px;font-size:6.99px;color:#222;transform:scaleX(0.8768);">Triangulations</div>
<svg style="left:4.2px;top:278.16px;" width="3" height="4" viewBox="0 0 3 4"><path d="M0.2 0.2L2.6 2L0.2 3.8z" fill="#555"/></svg>
<svg style="left:12.8px;top:275.96000000000004px;" width="8" height="8" viewBox="0 0 8 8"><path d="M1.6 0.5h3.4l1.8 1.8v5.2H1.6z" fill="#fff" stroke="#666" stroke-width=".7"/></svg>
<div class="t" style="left:23px;top:276.06px;height:10px;line-height:10px;font-size:6.99px;color:#222;transform:scaleX(0.8631);">Unclassified</div>
<svg style="left:4.2px;top:289.62px;" width="3" height="4" viewBox="0 0 3 4"><path d="M0.2 0.2L2.6 2L0.2 3.8z" fill="#555"/></svg>
<svg style="left:12.8px;top:287.42px;" width="8" height="8" viewBox="0 0 8 8"><rect x="1.2" y="0.6" width="5.6" height="7" rx="1.2" fill="#6e6e6e"/><path d="M1.2 2.9h5.6M1.2 5.1h5.6" stroke="#ddd" stroke-width=".6"/></svg>
<div class="t" style="left:23px;top:287.52px;height:10px;line-height:10px;font-size:6.99px;color:#222;transform:scaleX(0.8437);">User Databases</div>
<svg style="left:4.2px;top:301.08000000000004px;" width="3" height="4" viewBox="0 0 3 4"><path d="M0.2 0.2L2.6 2L0.2 3.8z" fill="#555"/></svg>
<svg style="left:12.8px;top:298.88000000000005px;" width="8" height="8" viewBox="0 0 8 8"><path d="M1.6 0.5h3.4l1.8 1.8v5.2H1.6z" fill="#fff" stroke="#666" stroke-width=".7"/><rect x="0.4" y="3.4" width="3" height="2.6" fill="#3d9a42"/><rect x="3.6" y="5" width="3" height="2.4" fill="#555"/></svg>
<div class="t" style="left:23px;top:298.98px;height:10px;line-height:10px;font-size:6.99px;color:#222;transform:scaleX(0.9036);">Workflows</div>
<div style="left:142.9px;top:54px;width:2.4px;height:482px;background:linear-gradient(90deg,#d4d2d4,#bebcbe);"></div>
<div style="left:143.5px;top:54px;width:856.5px;height:12px;background:#8d8b8c;"></div>
<svg style="left:146px;top:55px;" width="240" height="11.2" viewBox="0 0 240 11.2">
<defs><linearGradient id="tg" x1="0" y1="0" x2="0" y2="1"><stop offset="0" stop-color="#e4ecf8"/><stop offset="1" stop-color="#cfdcf0"/></linearGradient>
<linearGradient id="ta" x1="0" y1="0" x2="0" y2="1"><stop offset="0" stop-color="#ffffff"/><stop offset="1" stop-color="#e6eefa"/></linearGradient></defs>
<path d="M3 11.2C7 11.2 8 2.2 12.5 2.2H64.5C66.5 2.2 67 3.2 67.5 4.2L70 11.2z" fill="url(#tg)" stroke="#f2f6fc" stroke-width=".5"/>
<path d="M62.5 11.2C66.5 11.2 67.5 2.2 72 2.2H119C121 2.2 121.5 3.2 122 4.2L124.5 11.2z" fill="url(#tg)" stroke="#f2f6fc" stroke-width=".5"/>
<path d="M116.5 11.2C120.5 11.2 121 0.8 125.5 0.8H227C228.3 0.8 228.8 1.4 228.8 2.6V11.2z" fill="url(#ta)"/>
</svg>
<svg style="left:158.3px;top:58px;" width="8" height="7" viewBox="0 0 8 7"><path d="M4 0.3L0.2 3.8h1.1v3h2V4.7h1.4v2.1h2v-3h1.1z" fill="#1b6fa3"/></svg>
<div class="t" style="left:168.2px;top:57.50px;height:10px;line-height:10px;font-size:6.88px;color:#1c1c1c;transform:scaleX(0.8492);">Start Page</div>
<svg style="left:199.8px;top:59.4px;" width="4.4" height="4.4" viewBox="0 0 4.4 4.4"><path d="M0.5 0.5L3.9 3.9M3.9 0.5L0.5 3.9" stroke="#6a6f78" stroke-width="0.9"/></svg>
<div style="left:216.5px;top:57.5px;width:7.5px;height:8px;background:#3c9a3e;"></div>
<div class="t" style="left:218px;top:57.50px;height:10px;line-height:10px;font-size:7.33px;color:#fff;font-weight:bold;transform:scaleX(0.885);transform-origin:0 50%;">E</div>
<svg style="left:221px;top:62.5px;" width="3.4" height="3.2" viewBox="0 0 3.4 3.2"><path d="M3.4 0V3.2H0z" fill="#e4ecf8"/></svg>
<div class="t" style="left:226.7px;top:57.50px;height:10px;line-height:10px;font-size:6.88px;color:#1c1c1c;transform:scaleX(0.8305);">Envisage</div>
<svg style="left:254.5px;top:59.4px;" width="4.4" height="4.4" viewBox="0 0 4.4 4.4"><path d="M0.5 0.5L3.9 3.9M3.9 0.5L0.5 3.9" stroke="#6a6f78" stroke-width="0.9"/></svg>
<div style="left:269.2px;top:57.2px;width:8.5px;height:7.8px;background:#1b7fb3;"></div>
<div style="left:272.9px;top:60px;width:1.2px;height:3.8px;background:#fff;"></div>
<div style="left:272.1px;top:58.3px;width:2.8px;height:2.6px;background:#fff;border-radius:50%"></div>
<div style="left:273px;top:59.1px;width:1px;height:1px;background:#1b7fb3;border-radius:50%"></div>
<div class="t" style="left:279.5px;top:57.30px;height:10px;line-height:10px;font-size:6.88px;color:#111;font-weight:bold;transform:scaleX(0.8872);">Isis - originaldrilling.dhd.isis</div>
<svg style="left:366.3px;top:59.099999999999994px;" width="4.4" height="4.4" viewBox="0 0 4.4 4.4"><path d="M0.5 0.5L3.9 3.9M3.9 0.5L0.5 3.9" stroke="#555" stroke-width="1"/></svg>
<svg style="left:987px;top:58px;" width="4.6" height="2.8" viewBox="0 0 4.6 2.8"><path d="M0 0h4.6l-2.3 2.8z" fill="#333"/></svg>
<svg style="left:994.1999999999999px;top:57.099999999999994px;" width="4.4" height="4.4" viewBox="0 0 4.4 4.4"><path d="M0.5 0.5L3.9 3.9M3.9 0.5L0.5 3.9" stroke="#333" stroke-width="0.9"/></svg>
<div style="left:143.5px;top:66px;width:856px;height:380.2px;background:#dbe7f6;"></div>
<div style="left:143.5px;top:66px;width:856px;height:1px;background:#a9c8ea;"></div>
<div style="left:145.9px;top:67px;width:852px;height:377.4px;background:#fff;border:1px solid #bcd2ec;"></div>
<div style="left:146.8px;top:67.3px;width:850.4px;height:25px;background:#f1f0f1;"></div>
<div style="left:146.8px;top:92.3px;width:850.4px;height:351.9px;background:#fff;"></div>
<div style="left:147.6px;top:67.9px;width:37.8px;height:11.2px;background:#fff;border:1px solid #b9b9b9;"></div>
<div class="t" style="left:150.3px;top:69.40px;height:10px;line-height:10px;font-size:6.88px;color:#222;transform:scaleX(0.8731);">L16-N4</div>
<svg style="left:178.3px;top:72.3px;" width="5" height="3" viewBox="0 0 5 3"><path d="M0.5 0.4L2.5 2.4L4.5 0.4" stroke="#555" fill="none" stroke-width=".7"/></svg>
<div style="left:148px;top:81.9px;width:28.599999999999994px;height:10.4px;background:#f0f0f0;border:1px solid #dedede;border-bottom:none;"></div>
<div class="t" style="left:150.8px;top:83.00px;height:10px;line-height:10px;font-size:6.88px;color:#222;transform:scaleX(0.8541);">COLLAR</div>
<div style="left:176.6px;top:81.9px;width:27.200000000000017px;height:10.4px;background:#f0f0f0;border:1px solid #dedede;border-bottom:none;"></div>
<div class="t" style="left:180.6px;top:83.00px;height:10px;line-height:10px;font-size:6.88px;color:#222;transform:scaleX(0.7245);">SURVEY</div>
<div style="left:203.20000000000002px;top:79.6px;width:27.299999999999994px;height:13px;background:#fff;border:1px solid #e4e4e4;border-bottom:none;"></div>
<div class="t" style="left:207.8px;top:81.80px;height:10px;line-height:10px;font-size:6.88px;color:#222;transform:scaleX(0.7626);">ASSAY</div>
<div style="left:229.9px;top:81.9px;width:33.099999999999994px;height:10.4px;background:#f0f0f0;border:1px solid #dedede;border-bottom:none;"></div>
<div class="t" style="left:232.7px;top:83.00px;height:10px;line-height:10px;font-size:6.88px;color:#222;transform:scaleX(0.7967);">GEOLOGY</div>
<div style="left:263px;top:81.9px;width:38.30000000000001px;height:10.4px;background:#f0f0f0;border:1px solid #dedede;border-bottom:none;"></div>
<div class="t" style="left:266.7px;top:83.00px;height:10px;line-height:10px;font-size:6.88px;color:#222;transform:scaleX(0.7829);">STRUCTURE</div>
<div style="left:149.4px;top:92.3px;width:311.6px;height:10.100000000000009px;background:#f0f0f0;"></div>
<div style="left:149.4px;top:92.3px;width:20.400000000000006px;height:350.59999999999997px;background:#f0f0f0;"></div>
<div class="t" style="left:181.7px;top:94.00px;height:10px;line-height:10px;font-size:6.88px;color:#111;font-weight:bold;transform:scaleX(0.8691);">FROM</div>
<div class="t" style="left:228.5px;top:94.00px;height:10px;line-height:10px;font-size:6.88px;color:#111;font-weight:bold;transform:scaleX(0.7947);">TO</div>
<div class="t" style="left:269.8px;top:94.00px;height:10px;line-height:10px;font-size:6.88px;color:#111;font-weight:bold;transform:scaleX(0.7748);">CU</div>
<div class="t" style="left:305.8px;top:94.00px;height:10px;line-height:10px;font-size:6.88px;color:#111;font-weight:bold;transform:scaleX(0.8097);">RECOV</div>
<div class="t" style="left:352.6px;top:94.00px;height:10px;line-height:10px;font-size:6.88px;color:#111;font-weight:bold;transform:scaleX(0.9057);">AU</div>
<div class="t" style="left:388.1px;top:94.00px;height:10px;line-height:10px;font-size:6.88px;color:#111;font-weight:bold;transform:scaleX(0.9320);">WIDTH</div>
<div class="t" style="left:429.5px;top:94.00px;height:10px;line-height:10px;font-size:6.88px;color:#111;font-weight:bold;transform:scaleX(0.7956);">BLEACH</div>
<div style="left:148.9px;top:92.3px;width:1px;height:101.46px;background:#dcdcdc;"></div>
<div style="left:169.3px;top:92.3px;width:1px;height:101.46px;background:#dcdcdc;"></div>
<div style="left:210.9px;top:92.3px;width:1px;height:101.46px;background:#dcdcdc;"></div>
<div style="left:252.1px;top:92.3px;width:1px;height:101.46px;background:#dcdcdc;"></div>
<div style="left:293.8px;top:92.3px;width:1px;height:101.46px;background:#dcdcdc;"></div>
<div style="left:335.9px;top:92.3px;width:1px;height:101.46px;background:#dcdcdc;"></div>
<div style="left:377.2px;top:92.3px;width:1px;height:101.46px;background:#dcdcdc;"></div>
<div style="left:418.7px;top:92.3px;width:1px;height:101.46px;background:#dcdcdc;"></div>
<div style="left:460.5px;top:92.3px;width:1px;height:101.46px;background:#dcdcdc;"></div>
<div style="left:149.4px;top:91.8px;width:311.6px;height:1px;background:#dcdcdc;"></div>
<div style="left:149.4px;top:101.9px;width:311.6px;height:1px;background:#dcdcdc;"></div>
<div style="left:149.4px;top:113.32000000000001px;width:311.6px;height:1px;background:#dcdcdc;"></div>
<div style="left:149.4px;top:124.74000000000001px;width:311.6px;height:1px;background:#dcdcdc;"></div>
<div style="left:149.4px;top:136.16px;width:311.6px;height:1px;background:#dcdcdc;"></div>
<div style="left:149.4px;top:147.58px;width:311.6px;height:1px;background:#dcdcdc;"></div>
<div style="left:149.4px;top:159.0px;width:311.6px;height:1px;background:#dcdcdc;"></div>
<div style="left:149.4px;top:170.42000000000002px;width:311.6px;height:1px;background:#dcdcdc;"></div>
<div style="left:149.4px;top:181.84px;width:311.6px;height:1px;background:#dcdcdc;"></div>
<div style="left:149.4px;top:193.26px;width:311.6px;height:1px;background:#dcdcdc;"></div>
<div class="t" style="left:149.4px;top:103.81px;height:10px;line-height:10px;font-size:7.1px;color:#111;font-weight:bold;width:20.400000000000006px;text-align:center;transform:scaleX(0.885);transform-origin:50% 50%;">1</div>
<div class="t" style="left:183.39999999999998px;top:103.81px;height:10px;line-height:10px;font-size:6.88px;color:#333;transform:scaleX(0.8289);">0.00</div>
<div class="t" style="left:225.14999999999998px;top:103.81px;height:10px;line-height:10px;font-size:6.88px;color:#333;transform:scaleX(0.8289);">1.10</div>
<div class="t" style="left:264.97499999999997px;top:103.81px;height:10px;line-height:10px;font-size:6.88px;color:#333;transform:scaleX(0.8334);">0.800</div>
<div class="t" style="left:301.2px;top:103.81px;height:10px;line-height:10px;font-size:6.88px;color:#333;transform:scaleX(0.8359);">-99.0</div>
<div class="t" style="left:348.525px;top:103.81px;height:10px;line-height:10px;font-size:6.88px;color:#333;transform:scaleX(0.8334);">0.717</div>
<div class="t" style="left:391.95px;top:103.81px;height:10px;line-height:10px;font-size:6.88px;color:#333;transform:scaleX(0.8289);">1.10</div>
<div class="t" style="left:420.9px;top:103.81px;height:10px;line-height:10px;font-size:6.88px;color:#222;transform:scaleX(0.8727);">MB</div>
<div class="t" style="left:149.4px;top:115.23px;height:10px;line-height:10px;font-size:7.1px;color:#111;font-weight:bold;width:20.400000000000006px;text-align:center;transform:scaleX(0.885);transform-origin:50% 50%;">2</div>
<div class="t" style="left:183.39999999999998px;top:115.23px;height:10px;line-height:10px;font-size:6.88px;color:#333;transform:scaleX(0.8289);">1.10</div>
<div class="t" style="left:225.14999999999998px;top:115.23px;height:10px;line-height:10px;font-size:6.88px;color:#333;transform:scaleX(0.8289);">1.40</div>
<div class="t" style="left:264.97499999999997px;top:115.23px;height:10px;line-height:10px;font-size:6.88px;color:#333;transform:scaleX(0.8334);">0.100</div>
<div class="t" style="left:301.2px;top:115.23px;height:10px;line-height:10px;font-size:6.88px;color:#333;transform:scaleX(0.8359);">-99.0</div>
<div class="t" style="left:348.525px;top:115.23px;height:10px;line-height:10px;font-size:6.88px;color:#333;transform:scaleX(0.8334);">0.100</div>
<div class="t" style="left:391.95px;top:115.23px;height:10px;line-height:10px;font-size:6.88px;color:#333;transform:scaleX(0.8289);">0.30</div>
<div class="t" style="left:420.9px;top:115.23px;height:10px;line-height:10px;font-size:6.88px;color:#222;transform:scaleX(0.8052);">UB</div>
<div class="t" style="left:149.4px;top:126.65px;height:10px;line-height:10px;font-size:7.1px;color:#111;font-weight:bold;width:20.400000000000006px;text-align:center;transform:scaleX(0.885);transform-origin:50% 50%;">3</div>
<div class="t" style="left:183.39999999999998px;top:126.65px;height:10px;line-height:10px;font-size:6.88px;color:#333;transform:scaleX(0.8289);">1.40</div>
<div class="t" style="left:225.14999999999998px;top:126.65px;height:10px;line-height:10px;font-size:6.88px;color:#333;transform:scaleX(0.8289);">2.00</div>
<div class="t" style="left:264.97499999999997px;top:126.65px;height:10px;line-height:10px;font-size:6.88px;color:#333;transform:scaleX(0.8334);">0.290</div>
<div class="t" style="left:301.2px;top:126.65px;height:10px;line-height:10px;font-size:6.88px;color:#333;transform:scaleX(0.8359);">-99.0</div>
<div class="t" style="left:348.525px;top:126.65px;height:10px;line-height:10px;font-size:6.88px;color:#333;transform:scaleX(0.8334);">0.286</div>
<div class="t" style="left:391.95px;top:126.65px;height:10px;line-height:10px;font-size:6.88px;color:#333;transform:scaleX(0.8289);">0.60</div>
<div class="t" style="left:420.9px;top:126.65px;height:10px;line-height:10px;font-size:6.88px;color:#222;transform:scaleX(0.8214);">WB</div>
<div class="t" style="left:149.4px;top:138.07px;height:10px;line-height:10px;font-size:7.1px;color:#111;font-weight:bold;width:20.400000000000006px;text-align:center;transform:scaleX(0.885);transform-origin:50% 50%;">4</div>
<div class="t" style="left:183.39999999999998px;top:138.07px;height:10px;line-height:10px;font-size:6.88px;color:#333;transform:scaleX(0.8289);">2.00</div>
<div class="t" style="left:225.14999999999998px;top:138.07px;height:10px;line-height:10px;font-size:6.88px;color:#333;transform:scaleX(0.8289);">2.40</div>
<div class="t" style="left:264.97499999999997px;top:138.07px;height:10px;line-height:10px;font-size:6.88px;color:#333;transform:scaleX(0.8334);">0.570</div>
<div class="t" style="left:301.2px;top:138.07px;height:10px;line-height:10px;font-size:6.88px;color:#333;transform:scaleX(0.8359);">-99.0</div>
<div class="t" style="left:348.525px;top:138.07px;height:10px;line-height:10px;font-size:6.88px;color:#333;transform:scaleX(0.8334);">0.540</div>
<div class="t" style="left:391.95px;top:138.07px;height:10px;line-height:10px;font-size:6.88px;color:#333;transform:scaleX(0.8289);">0.40</div>
<div class="t" style="left:420.9px;top:138.07px;height:10px;line-height:10px;font-size:6.88px;color:#222;transform:scaleX(0.8727);">MB</div>
<div class="t" style="left:149.4px;top:149.49px;height:10px;line-height:10px;font-size:7.1px;color:#111;font-weight:bold;width:20.400000000000006px;text-align:center;transform:scaleX(0.885);transform-origin:50% 50%;">5</div>
<div class="t" style="left:183.39999999999998px;top:149.49px;height:10px;line-height:10px;font-size:6.88px;color:#333;transform:scaleX(0.8289);">2.40</div>
<div class="t" style="left:225.14999999999998px;top:149.49px;height:10px;line-height:10px;font-size:6.88px;color:#333;transform:scaleX(0.8289);">2.80</div>
<div class="t" style="left:264.97499999999997px;top:149.49px;height:10px;line-height:10px;font-size:6.88px;color:#333;transform:scaleX(0.8334);">0.850</div>
<div class="t" style="left:301.2px;top:149.49px;height:10px;line-height:10px;font-size:6.88px;color:#333;transform:scaleX(0.8359);">-99.0</div>
<div class="t" style="left:348.525px;top:149.49px;height:10px;line-height:10px;font-size:6.88px;color:#333;transform:scaleX(0.8334);">0.751</div>
<div class="t" style="left:391.95px;top:149.49px;height:10px;line-height:10px;font-size:6.88px;color:#333;transform:scaleX(0.8289);">0.40</div>
<div class="t" style="left:420.9px;top:149.49px;height:10px;line-height:10px;font-size:6.88px;color:#222;transform:scaleX(0.8727);">MB</div>
<div class="t" style="left:149.4px;top:160.91px;height:10px;line-height:10px;font-size:7.1px;color:#111;font-weight:bold;width:20.400000000000006px;text-align:center;transform:scaleX(0.885);transform-origin:50% 50%;">6</div>
<div class="t" style="left:183.39999999999998px;top:160.91px;height:10px;line-height:10px;font-size:6.88px;color:#333;transform:scaleX(0.8289);">2.80</div>
<div class="t" style="left:225.14999999999998px;top:160.91px;height:10px;line-height:10px;font-size:6.88px;color:#333;transform:scaleX(0.8289);">3.10</div>
<div class="t" style="left:264.97499999999997px;top:160.91px;height:10px;line-height:10px;font-size:6.88px;color:#333;transform:scaleX(0.8334);">0.360</div>
<div class="t" style="left:301.2px;top:160.91px;height:10px;line-height:10px;font-size:6.88px;color:#333;transform:scaleX(0.8359);">-99.0</div>
<div class="t" style="left:348.525px;top:160.91px;height:10px;line-height:10px;font-size:6.88px;color:#333;transform:scaleX(0.8334);">0.352</div>
<div class="t" style="left:391.95px;top:160.91px;height:10px;line-height:10px;font-size:6.88px;color:#333;transform:scaleX(0.8289);">0.30</div>
<div class="t" style="left:420.9px;top:160.91px;height:10px;line-height:10px;font-size:6.88px;color:#222;transform:scaleX(0.8214);">WB</div>
<div class="t" style="left:149.4px;top:172.33px;height:10px;line-height:10px;font-size:7.1px;color:#111;font-weight:bold;width:20.400000000000006px;text-align:center;transform:scaleX(0.885);transform-origin:50% 50%;">7</div>
<div class="t" style="left:183.39999999999998px;top:172.33px;height:10px;line-height:10px;font-size:6.88px;color:#333;transform:scaleX(0.8289);">3.10</div>
<div class="t" style="left:225.14999999999998px;top:172.33px;height:10px;line-height:10px;font-size:6.88px;color:#333;transform:scaleX(0.8289);">3.60</div>
<div class="t" style="left:264.97499999999997px;top:172.33px;height:10px;line-height:10px;font-size:6.88px;color:#333;transform:scaleX(0.8334);">0.800</div>
<div class="t" style="left:301.2px;top:172.33px;height:10px;line-height:10px;font-size:6.88px;color:#333;transform:scaleX(0.8359);">-99.0</div>
<div class="t" style="left:348.525px;top:172.33px;height:10px;line-height:10px;font-size:6.88px;color:#333;transform:scaleX(0.8334);">0.717</div>
<div class="t" style="left:391.95px;top:172.33px;height:10px;line-height:10px;font-size:6.88px;color:#333;transform:scaleX(0.8289);">0.50</div>
<div class="t" style="left:420.9px;top:172.33px;height:10px;line-height:10px;font-size:6.88px;color:#222;transform:scaleX(0.8727);">MB</div>
<div class="t" style="left:149.4px;top:184.55px;height:10px;line-height:10px;font-size:7.77px;color:#111;font-weight:bold;width:20.400000000000006px;text-align:center;transform:scaleX(0.885);transform-origin:50% 50%;">*</div>
<div class="t" style="left:183.39999999999998px;top:183.75px;height:10px;line-height:10px;font-size:6.88px;color:#333;transform:scaleX(0.8289);">0.00</div>
<div class="t" style="left:225.14999999999998px;top:183.75px;height:10px;line-height:10px;font-size:6.88px;color:#333;transform:scaleX(0.8289);">0.00</div>
<div class="t" style="left:264.97499999999997px;top:183.75px;height:10px;line-height:10px;font-size:6.88px;color:#333;transform:scaleX(0.8334);">0.000</div>
<div class="t" style="left:303.8px;top:183.75px;height:10px;line-height:10px;font-size:6.88px;color:#333;transform:scaleX(0.8261);">0.0</div>
<div class="t" style="left:348.525px;top:183.75px;height:10px;line-height:10px;font-size:6.88px;color:#333;transform:scaleX(0.8334);">0.000</div>
<div class="t" style="left:391.95px;top:183.75px;height:10px;line-height:10px;font-size:6.88px;color:#333;transform:scaleX(0.8289);">0.00</div>
<div style="left:169.60000000000002px;top:102.30000000000001px;width:41.199999999999996px;height:11.62px;border:1.2px solid #1a1a1a;"></div>
<svg style="left:411px;top:425px;" width="7" height="10" viewBox="0 0 7 10"><path d="M0.6 0.6v7.6l1.8-1.6l1.2 2.8l1.2-.5l-1.2-2.7h2.4z" fill="#fff" stroke="#222" stroke-width=".7"/></svg>
<div style="left:992.3px;top:67.5px;width:5.2px;height:377px;background:#ebe9ee;"></div>
<div style="left:992.8px;top:92.5px;width:4.2px;height:10px;background:#d6d4d8;"></div>
<div style="left:143.5px;top:446.2px;width:856.5px;height:2.6px;background:linear-gradient(#d8d6d8,#bdbcc2);"></div>
<div style="left:145.3px;top:448.7px;width:854.7px;height:11.8px;background:linear-gradient(#cbd3ed,#eff2fa);"></div>
<div class="t" style="left:151px;top:451.50px;height:10px;line-height:10px;font-size:6.88px;color:#222;transform:scaleX(0.8305);">Envisage</div>
<svg style="left:992.3000000000001px;top:451.5px;" width="4.6" height="4.6" viewBox="0 0 4.6 4.6"><path d="M0.5 0.5L4.1 4.1M4.1 0.5L0.5 4.1" stroke="#445" stroke-width="0.8"/></svg>
<div style="left:145.7px;top:460.5px;width:854.3px;height:75.5px;background:#fff;"></div>
<svg style="left:147px;top:466px;" width="9" height="7" viewBox="0 0 9 7"><path d="M0.8 0.8h4.6l2.8 2.7l-2.8 2.7H0.8z" fill="#e8f2f8" stroke="#1b7fb3" stroke-width="1.1"/></svg>
<svg style="left:147px;top:475.8px;" width="9" height="9" viewBox="0 0 9 9"><circle cx="4" cy="4.3" r="2.2" fill="none" stroke="#1b7fb3" stroke-width="1.3"/><g stroke="#1b7fb3" stroke-width="1.2"><path d="M4 0.4v1.5M4 6.7v1.5M0.1 4.3h1.5M6.4 4.3h1.5M1.2 1.5l1 1M5.8 6.1l1 1M1.2 7.1l1-1M5.8 2.5l1-1"/></g><rect x="5.4" y="5.6" width="2.8" height="2.8" fill="#d0323a"/></svg>
<svg style="left:147px;top:488px;" width="9" height="9" viewBox="0 0 9 9"><path d="M0.8 0.8h5.6l1.6 1.6v5.8H0.8z" fill="#e8f2f8" stroke="#1b7fb3" stroke-width="1.1"/><rect x="2.2" y="0.8" width="3.4" height="2.4" fill="#1b7fb3"/><rect x="4.6" y="4.6" width="3.2" height="3.2" fill="#3d9a42"/></svg>
<svg style="left:147px;top:499.5px;" width="9" height="9" viewBox="0 0 9 9"><rect x="0.6" y="3" width="7.8" height="3.6" fill="#1b7fb3"/><rect x="2.2" y="0.8" width="4.6" height="2.4" fill="#fff" stroke="#1b7fb3" stroke-width=".8"/><rect x="2.2" y="5.4" width="4.6" height="2.8" fill="#fff" stroke="#1b7fb3" stroke-width=".8"/></svg>
<svg style="left:147px;top:510.4px;" width="9" height="9" viewBox="0 0 9 9"><rect x="0.8" y="2" width="5.4" height="6.4" fill="#e8f2f8" stroke="#1b7fb3" stroke-width="1"/><rect x="3.4" y="0.8" width="4.8" height="6" fill="#e8f2f8" stroke="#1b7fb3" stroke-width="1"/><path d="M3.4 3h4.8" stroke="#1b7fb3" stroke-width=".8"/></svg>
<div style="left:147px;top:521.5px;width:9.5px;height:4.5px;background:#e9e9e9;"></div>
<svg style="left:152.3px;top:522.2px;" width="3" height="3.4" viewBox="0 0 3 3.4"><path d="M0 0.3h3M0.3 1.3h2.4L1.5 3z" stroke="#333" stroke-width=".5" fill="#333"/></svg>
<div style="left:0px;top:536px;width:1000px;height:14px;background:#c5c2c5;"></div>
<div style="left:0px;top:533px;width:32.5px;height:15px;background:#fff;"></div>
<div class="t" style="left:5.4px;top:537.10px;height:10px;line-height:10px;font-size:6.88px;color:#222;transform:scaleX(0.8533);">Data</div>
<svg style="left:22.5px;top:539.4px;" width="4.0" height="4.0" viewBox="0 0 4.0 4.0"><path d="M0.5 0.5L3.5 3.5M3.5 0.5L0.5 3.5" stroke="#555" stroke-width="0.9"/></svg>
<div style="left:32.8px;top:536.7px;width:42.7px;height:11.2px;background:#e9e9e9;border:1px solid #f6f6f6;"></div>
<div class="t" style="left:37.5px;top:538.20px;height:10px;line-height:10px;font-size:6.88px;color:#222;transform:scaleX(0.8536);">Changes</div>
<svg style="left:65.7px;top:540.4px;" width="4.0" height="4.0" viewBox="0 0 4.0 4.0"><path d="M0.5 0.5L3.5 3.5M3.5 0.5L0.5 3.5" stroke="#555" stroke-width="0.9"/></svg>
<div style="left:145.7px;top:536.7px;width:66.60000000000002px;height:11.2px;background:#e9e9e9;border:1px solid #f6f6f6;"></div>
<div class="t" style="left:150.4px;top:538.20px;height:10px;line-height:10px;font-size:6.88px;color:#222;transform:scaleX(0.8940);">Workbench Client</div>
<svg style="left:203.3px;top:540.4px;" width="4.0" height="4.0" viewBox="0 0 4.0 4.0"><path d="M0.5 0.5L3.5 3.5M3.5 0.5L0.5 3.5" stroke="#555" stroke-width="0.9"/></svg>
<div style="left:213.6px;top:536.7px;width:68.1px;height:11.2px;background:#e9e9e9;border:1px solid #f6f6f6;"></div>
<div class="t" style="left:218.8px;top:538.20px;height:10px;line-height:10px;font-size:6.88px;color:#222;transform:scaleX(0.8730);">Workbench Server</div>
<svg style="left:272.7px;top:540.4px;" width="4.0" height="4.0" viewBox="0 0 4.0 4.0"><path d="M0.5 0.5L3.5 3.5M3.5 0.5L0.5 3.5" stroke="#555" stroke-width="0.9"/></svg>
<div style="left:283px;top:536.7px;width:65px;height:11.2px;background:#e9e9e9;border:1px solid #f6f6f6;"></div>
<div class="t" style="left:287.7px;top:538.20px;height:10px;line-height:10px;font-size:6.88px;color:#222;transform:scaleX(0.8535);">Envisage Console</div>
<svg style="left:339.5px;top:540.4px;" width="4.0" height="4.0" viewBox="0 0 4.0 4.0"><path d="M0.5 0.5L3.5 3.5M3.5 0.5L0.5 3.5" stroke="#555" stroke-width="0.9"/></svg>
<div style="left:348.8px;top:535px;width:42.89999999999998px;height:13px;background:#fff;"></div>
<div class="t" style="left:354.5px;top:537.10px;height:10px;line-height:10px;font-size:6.88px;color:#222;transform:scaleX(0.8269);">Envisage</div>
<svg style="left:381.9px;top:539.4px;" width="4.0" height="4.0" viewBox="0 0 4.0 4.0"><path d="M0.5 0.5L3.5 3.5M3.5 0.5L0.5 3.5" stroke="#555" stroke-width="0.9"/></svg>
<div style="left:0px;top:549.7px;width:1000px;height:12.3px;background:#0a5e28;"></div>
<div style="left:485.8px;top:75.4px;width:505.99999999999994px;height:396.4px;background:#f0f0f0;box-shadow:0 1px 5px 0.5px rgba(0,0,0,.26);"></div>
<div style="left:485.8px;top:75.4px;width:505.99999999999994px;height:15.5px;background:#fff;"></div>
<div style="left:489px;top:78px;width:8.6px;height:8.6px;background:#4aa32c;"></div>
<svg style="left:489px;top:78px;" width="8.6" height="8.6" viewBox="0 0 8.6 8.6"><path d="M1.6 6.4C2.6 3.6 4 2.2 5.2 2.2C6.4 2.2 7 3.6 7 6 M6.8 4.8C6.2 3.6 5.2 4 4.8 5 C4.4 6 4.8 6.4 5.4 6" fill="none" stroke="#e9f5e0" stroke-width=".7"/></svg>
<div class="t" style="left:500.8px;top:79.70px;height:10px;line-height:10px;font-size:6.99px;color:#9c9c9c;transform:scaleX(0.8898);">Legend Editor - thor.scd</div>
<div style="left:929.5px;top:82.6px;width:5.2px;height:0.8px;background:#b5b5b5;"></div>
<div style="left:953px;top:80.2px;width:5.4px;height:5.4px;border:1px solid #b9b9b9;"></div>
<svg style="left:976.5px;top:80px;" width="6" height="6" viewBox="0 0 6 6"><path d="M0.5 0.5L5.5 5.5M5.5 0.5L0.5 5.5" stroke="#a5a5a5" stroke-width=".7"/></svg>
<div class="t" style="left:489.3px;top:92.40px;height:10px;line-height:10px;font-size:6.88px;color:#222;transform:scaleX(0.8034);">File</div>
<div style="left:502px;top:91.5px;width:61px;height:13.5px;background:#f8f8f8;"></div>
<svg style="left:506.8px;top:93px;" width="8" height="9" viewBox="0 0 8 9"><path d="M0.9 0.8h3.6l2 2v5.4H0.9z" fill="#eef6fa" stroke="#3a86b8" stroke-width=".8"/><path d="M4.5 0.8v2h2" fill="none" stroke="#3a86b8" stroke-width=".6"/><path d="M5.4 5v3.6M3.6 6.8h3.6" stroke="#2a7d32" stroke-width="1.4"/></svg>
<svg style="left:517.4px;top:93.8px;" width="8.6" height="7" viewBox="0 0 8.6 7"><path d="M0.6 6.4V1.6h2.4l.7.8h3.6v4z" fill="#c9962a" stroke="#7a5c1c" stroke-width=".5"/><path d="M0.6 6.6L1.8 3.4h6.4L7.2 6.6z" fill="#f0b93a" stroke="#b98a22" stroke-width=".4"/></svg>
<svg style="left:529.5px;top:93.6px;" width="7.8" height="7.4" viewBox="0 0 7.8 7.4"><path d="M0.6 0.6h5.2l1.4 1.4v4.8H0.6z" fill="#e9f3f9" stroke="#2a7fb4" stroke-width="1"/><rect x="1.8" y="0.6" width="3.4" height="2.2" fill="#2a7fb4"/><rect x="1.8" y="4.4" width="4" height="2.4" fill="#fff" stroke="#2a7fb4" stroke-width=".5"/></svg>
<svg style="left:540.9px;top:93.6px;" width="8.2" height="7.8" viewBox="0 0 8.2 7.8"><path d="M0.6 0.6h5.2l1.4 1.4v4.8H0.6z" fill="#e9f3f9" stroke="#2a7fb4" stroke-width="1"/><rect x="1.8" y="0.6" width="3.4" height="2.2" fill="#2a7fb4"/><path d="M5.6 3.6v3.6M3.8 5.6l1.8 1.9l1.8-1.9" fill="none" stroke="#2a7d32" stroke-width="1.2"/></svg>
<div class="t" style="left:552.6px;top:93.20px;height:10px;line-height:10px;font-size:10.66px;color:#1f70aa;font-weight:bold;-webkit-text-stroke:0.5px #1f70aa;transform:scaleX(1.1050);">?</div>
<div style="left:488.3px;top:108.3px;width:83.4px;height:360.4px;background:#fff;border:1px solid #b4b4b4;"></div>
<svg style="left:491.2px;top:109.3px;" width="8" height="8.6" viewBox="0 0 8 8.6"><path d="M1.8 0.8h3.2l1.8 1.8v4.6H1.8z" fill="#fff" stroke="#3a3a3a" stroke-width=".7"/><path d="M0.3 4.4h4M3 2.6L5.2 4.4L3 6.2" stroke="#1f8a3a" fill="none" stroke-width="1.3"/><rect x="1.6" y="5.6" width="4.6" height="2.4" fill="#1f8a3a"/></svg>
<div class="t" style="left:501.4px;top:109.90px;height:10px;line-height:10px;font-size:6.99px;color:#222;transform:scaleX(0.9359);">thor.scd</div>
<svg style="left:492.2px;top:120.07600000000001px;" width="5.6" height="5.6" viewBox="0 0 5.6 5.6"><circle cx="2.8" cy="2.8" r="2.6" fill="#d2d2d2"/><path d="M1.3 2.8h3" stroke="#fff" stroke-width=".9"/></svg>
<div style="left:497.3px;top:122.676px;width:3px;height:0.6px;background:#d8d8d8;"></div>
<svg style="left:500.2px;top:119.176px;" width="8.4" height="7.4" viewBox="0 0 8.4 7.4"><defs><linearGradient id="fg" x1="0" y1="0" x2="0" y2="1"><stop offset="0" stop-color="#f6f4b0"/><stop offset="1" stop-color="#d6d43a"/></linearGradient></defs><path d="M0.5 1h2.6l.7.8h3.8v4.9H0.5z" fill="url(#fg)" stroke="#4a4a30" stroke-width=".6"/><rect x="5" y="3.6" width="3" height="3.4" fill="#1a1a1a"/><rect x="5.7" y="2.6" width="1.6" height="1.4" fill="none" stroke="#1a1a1a" stroke-width=".5"/><rect x="5.9" y="5.6" width="1.2" height="1" fill="#6a2a6a"/></svg>
<div class="t" style="left:511.5px;top:118.78px;height:10px;line-height:10px;font-size:6.88px;color:#111;font-weight:bold;transform:scaleX(0.8097);">BLOCK</div>
<div style="left:504.7px;top:132.05200000000002px;width:6px;height:0.6px;background:#d8d8d8;"></div>
<svg style="left:512.2px;top:127.852px;" width="7" height="8.6" viewBox="0 0 7 8.6"><rect x="1.2" y="2" width="2.3" height="6" fill="#fff" stroke="#111" stroke-width=".7"/><path d="M1.2 4h2.3M1.2 6h2.3" stroke="#111" stroke-width=".6"/><rect x="1.8" y="0.9" width="1.1" height="1.1" fill="#111"/><path d="M4.2 1.4c.8-1 2-.2 1 .8c-.4.4-.4.6-.4 1" fill="none" stroke="#b8cc2a" stroke-width=".8"/></svg>
<div class="t" style="left:521.4px;top:128.15px;height:10px;line-height:10px;font-size:6.88px;color:#222;transform:scaleX(0.9103);">[*] New Legend</div>
<div style="left:504.5px;top:126.876px;width:0.6px;height:5.376000000000005px;background:#d8d8d8;"></div>
<svg style="left:492.2px;top:138.82799999999997px;" width="5.6" height="5.6" viewBox="0 0 5.6 5.6"><circle cx="2.8" cy="2.8" r="2.6" fill="#d2d2d2"/><path d="M1.3 2.8h3" stroke="#fff" stroke-width=".9"/></svg>
<div style="left:497.3px;top:141.428px;width:3px;height:0.6px;background:#d8d8d8;"></div>
<svg style="left:500.2px;top:137.928px;" width="8.4" height="7.4" viewBox="0 0 8.4 7.4"><defs><linearGradient id="fg" x1="0" y1="0" x2="0" y2="1"><stop offset="0" stop-color="#f6f4b0"/><stop offset="1" stop-color="#d6d43a"/></linearGradient></defs><path d="M0.5 1h2.6l.7.8h3.8v4.9H0.5z" fill="url(#fg)" stroke="#4a4a30" stroke-width=".6"/><rect x="5" y="3.6" width="3" height="3.4" fill="#1a1a1a"/><rect x="5.7" y="2.6" width="1.6" height="1.4" fill="none" stroke="#1a1a1a" stroke-width=".5"/><rect x="5.9" y="5.6" width="1.2" height="1" fill="#6a2a6a"/></svg>
<div class="t" style="left:511.5px;top:137.53px;height:10px;line-height:10px;font-size:6.88px;color:#111;font-weight:bold;transform:scaleX(0.8268);">CHANNEL</div>
<div style="left:504.7px;top:150.804px;width:6px;height:0.6px;background:#d8d8d8;"></div>
<svg style="left:512.2px;top:146.60399999999998px;" width="7" height="8.6" viewBox="0 0 7 8.6"><rect x="1.2" y="2" width="2.3" height="6" fill="#fff" stroke="#111" stroke-width=".7"/><path d="M1.2 4h2.3M1.2 6h2.3" stroke="#111" stroke-width=".6"/><rect x="1.8" y="0.9" width="1.1" height="1.1" fill="#111"/><path d="M4.2 1.4c.8-1 2-.2 1 .8c-.4.4-.4.6-.4 1" fill="none" stroke="#b8cc2a" stroke-width=".8"/></svg>
<div class="t" style="left:521.4px;top:146.90px;height:10px;line-height:10px;font-size:6.88px;color:#222;transform:scaleX(0.9103);">[*] New Legend</div>
<div style="left:504.5px;top:145.628px;width:0.6px;height:5.376000000000005px;background:#d8d8d8;"></div>
<svg style="left:492.2px;top:157.57999999999998px;" width="5.6" height="5.6" viewBox="0 0 5.6 5.6"><circle cx="2.8" cy="2.8" r="2.6" fill="#d2d2d2"/><path d="M1.3 2.8h3" stroke="#fff" stroke-width=".9"/></svg>
<div style="left:497.3px;top:160.18px;width:3px;height:0.6px;background:#d8d8d8;"></div>
<svg style="left:500.2px;top:156.68px;" width="8.4" height="7.4" viewBox="0 0 8.4 7.4"><defs><linearGradient id="fg" x1="0" y1="0" x2="0" y2="1"><stop offset="0" stop-color="#f6f4b0"/><stop offset="1" stop-color="#d6d43a"/></linearGradient></defs><path d="M0.5 1h2.6l.7.8h3.8v4.9H0.5z" fill="url(#fg)" stroke="#4a4a30" stroke-width=".6"/><rect x="5" y="3.6" width="3" height="3.4" fill="#1a1a1a"/><rect x="5.7" y="2.6" width="1.6" height="1.4" fill="none" stroke="#1a1a1a" stroke-width=".5"/><rect x="5.9" y="5.6" width="1.2" height="1" fill="#6a2a6a"/></svg>
<div class="t" style="left:511.5px;top:156.28px;height:10px;line-height:10px;font-size:6.88px;color:#111;font-weight:bold;transform:scaleX(0.8776);">CONTOUR</div>
<div style="left:504.7px;top:169.556px;width:6px;height:0.6px;background:#d8d8d8;"></div>
<svg style="left:512.2px;top:165.356px;" width="7" height="8.6" viewBox="0 0 7 8.6"><rect x="1.2" y="2" width="2.3" height="6" fill="#fff" stroke="#111" stroke-width=".7"/><path d="M1.2 4h2.3M1.2 6h2.3" stroke="#111" stroke-width=".6"/><rect x="1.8" y="0.9" width="1.1" height="1.1" fill="#111"/><path d="M4.2 1.4c.8-1 2-.2 1 .8c-.4.4-.4.6-.4 1" fill="none" stroke="#b8cc2a" stroke-width=".8"/></svg>
<div class="t" style="left:521.4px;top:165.66px;height:10px;line-height:10px;font-size:6.88px;color:#222;transform:scaleX(0.9103);">[*] New Legend</div>
<div style="left:504.5px;top:164.38px;width:0.6px;height:5.376000000000005px;background:#d8d8d8;"></div>
<svg style="left:492.2px;top:176.332px;" width="5.6" height="5.6" viewBox="0 0 5.6 5.6"><circle cx="2.8" cy="2.8" r="2.6" fill="#d2d2d2"/><path d="M1.3 2.8h3" stroke="#fff" stroke-width=".9"/></svg>
<div style="left:497.3px;top:178.93200000000002px;width:3px;height:0.6px;background:#d8d8d8;"></div>
<svg style="left:500.2px;top:175.43200000000002px;" width="8.4" height="7.4" viewBox="0 0 8.4 7.4"><defs><linearGradient id="fg" x1="0" y1="0" x2="0" y2="1"><stop offset="0" stop-color="#f6f4b0"/><stop offset="1" stop-color="#d6d43a"/></linearGradient></defs><path d="M0.5 1h2.6l.7.8h3.8v4.9H0.5z" fill="url(#fg)" stroke="#4a4a30" stroke-width=".6"/><rect x="5" y="3.6" width="3" height="3.4" fill="#1a1a1a"/><rect x="5.7" y="2.6" width="1.6" height="1.4" fill="none" stroke="#1a1a1a" stroke-width=".5"/><rect x="5.9" y="5.6" width="1.2" height="1" fill="#6a2a6a"/></svg>
<div class="t" style="left:511.5px;top:175.03px;height:10px;line-height:10px;font-size:6.88px;color:#111;font-weight:bold;transform:scaleX(0.8296);">DRILL</div>
<div style="left:504.7px;top:188.308px;width:6px;height:0.6px;background:#d8d8d8;"></div>
<svg style="left:512.4px;top:184.50799999999998px;" width="5" height="8" viewBox="0 0 5 8"><defs><linearGradient id="gg" x1="0" y1="0" x2="0" y2="1"><stop offset="0" stop-color="#2aa43a"/><stop offset=".5" stop-color="#2a4ac0"/><stop offset="1" stop-color="#d02a2a"/></linearGradient></defs><rect x="0.9" y="1.4" width="2.6" height="6" fill="url(#gg)" stroke="#111" stroke-width=".6"/><rect x="1.6" y="0.4" width="1.2" height="1" fill="#111"/></svg>
<div style="left:520.4px;top:184.50799999999998px;width:18px;height:8px;background:#ececec;"></div>
<div class="t" style="left:521.6px;top:184.41px;height:10px;line-height:10px;font-size:6.88px;color:#222;transform:scaleX(0.7955);">GOLD</div>
<div style="left:504.7px;top:197.68400000000003px;width:6px;height:0.6px;background:#d8d8d8;"></div>
<svg style="left:512.2px;top:193.484px;" width="7" height="8.6" viewBox="0 0 7 8.6"><rect x="1.2" y="2" width="2.3" height="6" fill="#fff" stroke="#111" stroke-width=".7"/><path d="M1.2 4h2.3M1.2 6h2.3" stroke="#111" stroke-width=".6"/><rect x="1.8" y="0.9" width="1.1" height="1.1" fill="#111"/><path d="M4.2 1.4c.8-1 2-.2 1 .8c-.4.4-.4.6-.4 1" fill="none" stroke="#b8cc2a" stroke-width=".8"/></svg>
<div class="t" style="left:521.4px;top:193.78px;height:10px;line-height:10px;font-size:6.88px;color:#222;transform:scaleX(0.9103);">[*] New Legend</div>
<div style="left:504.5px;top:183.132px;width:0.6px;height:14.75200000000001px;background:#d8d8d8;"></div>
<svg style="left:492.2px;top:204.45999999999998px;" width="5.6" height="5.6" viewBox="0 0 5.6 5.6"><circle cx="2.8" cy="2.8" r="2.6" fill="#d2d2d2"/><path d="M1.3 2.8h3" stroke="#fff" stroke-width=".9"/></svg>
<div style="left:497.3px;top:207.06px;width:3px;height:0.6px;background:#d8d8d8;"></div>
<svg style="left:500.2px;top:203.56px;" width="8.4" height="7.4" viewBox="0 0 8.4 7.4"><defs><linearGradient id="fg" x1="0" y1="0" x2="0" y2="1"><stop offset="0" stop-color="#f6f4b0"/><stop offset="1" stop-color="#d6d43a"/></linearGradient></defs><path d="M0.5 1h2.6l.7.8h3.8v4.9H0.5z" fill="url(#fg)" stroke="#4a4a30" stroke-width=".6"/><rect x="5" y="3.6" width="3" height="3.4" fill="#1a1a1a"/><rect x="5.7" y="2.6" width="1.6" height="1.4" fill="none" stroke="#1a1a1a" stroke-width=".5"/><rect x="5.9" y="5.6" width="1.2" height="1" fill="#6a2a6a"/></svg>
<div class="t" style="left:511.5px;top:203.16px;height:10px;line-height:10px;font-size:6.88px;color:#111;font-weight:bold;transform:scaleX(0.8176);">GEOTECH</div>
<div style="left:504.7px;top:216.436px;width:6px;height:0.6px;background:#d8d8d8;"></div>
<svg style="left:512.2px;top:212.236px;" width="7" height="8.6" viewBox="0 0 7 8.6"><rect x="1.2" y="2" width="2.3" height="6" fill="#fff" stroke="#111" stroke-width=".7"/><path d="M1.2 4h2.3M1.2 6h2.3" stroke="#111" stroke-width=".6"/><rect x="1.8" y="0.9" width="1.1" height="1.1" fill="#111"/><path d="M4.2 1.4c.8-1 2-.2 1 .8c-.4.4-.4.6-.4 1" fill="none" stroke="#b8cc2a" stroke-width=".8"/></svg>
<div class="t" style="left:521.4px;top:212.54px;height:10px;line-height:10px;font-size:6.88px;color:#222;transform:scaleX(0.9103);">[*] New Legend</div>
<div style="left:504.5px;top:211.26px;width:0.6px;height:5.376000000000005px;background:#d8d8d8;"></div>
<svg style="left:492.2px;top:223.212px;" width="5.6" height="5.6" viewBox="0 0 5.6 5.6"><circle cx="2.8" cy="2.8" r="2.6" fill="#d2d2d2"/><path d="M1.3 2.8h3" stroke="#fff" stroke-width=".9"/></svg>
<div style="left:497.3px;top:225.812px;width:3px;height:0.6px;background:#d8d8d8;"></div>
<svg style="left:500.2px;top:222.312px;" width="8.4" height="7.4" viewBox="0 0 8.4 7.4"><defs><linearGradient id="fg" x1="0" y1="0" x2="0" y2="1"><stop offset="0" stop-color="#f6f4b0"/><stop offset="1" stop-color="#d6d43a"/></linearGradient></defs><path d="M0.5 1h2.6l.7.8h3.8v4.9H0.5z" fill="url(#fg)" stroke="#4a4a30" stroke-width=".6"/><rect x="5" y="3.6" width="3" height="3.4" fill="#1a1a1a"/><rect x="5.7" y="2.6" width="1.6" height="1.4" fill="none" stroke="#1a1a1a" stroke-width=".5"/><rect x="5.9" y="5.6" width="1.2" height="1" fill="#6a2a6a"/></svg>
<div class="t" style="left:511.5px;top:221.91px;height:10px;line-height:10px;font-size:6.88px;color:#111;font-weight:bold;transform:scaleX(0.8965);">MAP</div>
<div style="left:504.7px;top:235.188px;width:6px;height:0.6px;background:#d8d8d8;"></div>
<svg style="left:512.2px;top:230.98799999999997px;" width="7" height="8.6" viewBox="0 0 7 8.6"><rect x="1.2" y="2" width="2.3" height="6" fill="#fff" stroke="#111" stroke-width=".7"/><path d="M1.2 4h2.3M1.2 6h2.3" stroke="#111" stroke-width=".6"/><rect x="1.8" y="0.9" width="1.1" height="1.1" fill="#111"/><path d="M4.2 1.4c.8-1 2-.2 1 .8c-.4.4-.4.6-.4 1" fill="none" stroke="#b8cc2a" stroke-width=".8"/></svg>
<div class="t" style="left:521.4px;top:231.29px;height:10px;line-height:10px;font-size:6.88px;color:#222;transform:scaleX(0.9103);">[*] New Legend</div>
<div style="left:504.5px;top:230.012px;width:0.6px;height:5.375999999999976px;background:#d8d8d8;"></div>
<svg style="left:492.2px;top:241.96399999999997px;" width="5.6" height="5.6" viewBox="0 0 5.6 5.6"><circle cx="2.8" cy="2.8" r="2.6" fill="#d2d2d2"/><path d="M1.3 2.8h3" stroke="#fff" stroke-width=".9"/></svg>
<div style="left:497.3px;top:244.564px;width:3px;height:0.6px;background:#d8d8d8;"></div>
<svg style="left:500.2px;top:241.064px;" width="8.4" height="7.4" viewBox="0 0 8.4 7.4"><defs><linearGradient id="fg" x1="0" y1="0" x2="0" y2="1"><stop offset="0" stop-color="#f6f4b0"/><stop offset="1" stop-color="#d6d43a"/></linearGradient></defs><path d="M0.5 1h2.6l.7.8h3.8v4.9H0.5z" fill="url(#fg)" stroke="#4a4a30" stroke-width=".6"/><rect x="5" y="3.6" width="3" height="3.4" fill="#1a1a1a"/><rect x="5.7" y="2.6" width="1.6" height="1.4" fill="none" stroke="#1a1a1a" stroke-width=".5"/><rect x="5.9" y="5.6" width="1.2" height="1" fill="#6a2a6a"/></svg>
<div class="t" style="left:511.5px;top:240.66px;height:10px;line-height:10px;font-size:6.88px;color:#111;font-weight:bold;transform:scaleX(0.8943);">MISTIE</div>
<div style="left:504.7px;top:253.94px;width:6px;height:0.6px;background:#d8d8d8;"></div>
<svg style="left:512.2px;top:249.73999999999998px;" width="7" height="8.6" viewBox="0 0 7 8.6"><rect x="1.2" y="2" width="2.3" height="6" fill="#fff" stroke="#111" stroke-width=".7"/><path d="M1.2 4h2.3M1.2 6h2.3" stroke="#111" stroke-width=".6"/><rect x="1.8" y="0.9" width="1.1" height="1.1" fill="#111"/><path d="M4.2 1.4c.8-1 2-.2 1 .8c-.4.4-.4.6-.4 1" fill="none" stroke="#b8cc2a" stroke-width=".8"/></svg>
<div class="t" style="left:521.4px;top:250.04px;height:10px;line-height:10px;font-size:6.88px;color:#222;transform:scaleX(0.9103);">[*] New Legend</div>
<div style="left:504.5px;top:248.76399999999998px;width:0.6px;height:5.376000000000005px;background:#d8d8d8;"></div>
<svg style="left:492.2px;top:260.71599999999995px;" width="5.6" height="5.6" viewBox="0 0 5.6 5.6"><circle cx="2.8" cy="2.8" r="2.6" fill="#d2d2d2"/><path d="M1.3 2.8h3" stroke="#fff" stroke-width=".9"/></svg>
<div style="left:497.3px;top:263.316px;width:3px;height:0.6px;background:#d8d8d8;"></div>
<svg style="left:500.2px;top:259.816px;" width="8.4" height="7.4" viewBox="0 0 8.4 7.4"><defs><linearGradient id="fg" x1="0" y1="0" x2="0" y2="1"><stop offset="0" stop-color="#f6f4b0"/><stop offset="1" stop-color="#d6d43a"/></linearGradient></defs><path d="M0.5 1h2.6l.7.8h3.8v4.9H0.5z" fill="url(#fg)" stroke="#4a4a30" stroke-width=".6"/><rect x="5" y="3.6" width="3" height="3.4" fill="#1a1a1a"/><rect x="5.7" y="2.6" width="1.6" height="1.4" fill="none" stroke="#1a1a1a" stroke-width=".5"/><rect x="5.9" y="5.6" width="1.2" height="1" fill="#6a2a6a"/></svg>
<div class="t" style="left:511.5px;top:259.42px;height:10px;line-height:10px;font-size:6.88px;color:#111;font-weight:bold;transform:scaleX(0.8425);">PATTERN</div>
<div style="left:504.7px;top:272.692px;width:6px;height:0.6px;background:#d8d8d8;"></div>
<svg style="left:512.2px;top:268.492px;" width="7" height="8.6" viewBox="0 0 7 8.6"><rect x="1.2" y="2" width="2.3" height="6" fill="#fff" stroke="#111" stroke-width=".7"/><path d="M1.2 4h2.3M1.2 6h2.3" stroke="#111" stroke-width=".6"/><rect x="1.8" y="0.9" width="1.1" height="1.1" fill="#111"/><path d="M4.2 1.4c.8-1 2-.2 1 .8c-.4.4-.4.6-.4 1" fill="none" stroke="#b8cc2a" stroke-width=".8"/></svg>
<div class="t" style="left:521.4px;top:268.79px;height:10px;line-height:10px;font-size:6.88px;color:#222;transform:scaleX(0.9103);">[*] New Legend</div>
<div style="left:504.5px;top:267.51599999999996px;width:0.6px;height:5.376000000000033px;background:#d8d8d8;"></div>
<svg style="left:492.2px;top:279.468px;" width="5.6" height="5.6" viewBox="0 0 5.6 5.6"><circle cx="2.8" cy="2.8" r="2.6" fill="#d2d2d2"/><path d="M1.3 2.8h3" stroke="#fff" stroke-width=".9"/></svg>
<div style="left:497.3px;top:282.06800000000004px;width:3px;height:0.6px;background:#d8d8d8;"></div>
<svg style="left:500.2px;top:278.56800000000004px;" width="8.4" height="7.4" viewBox="0 0 8.4 7.4"><defs><linearGradient id="fg" x1="0" y1="0" x2="0" y2="1"><stop offset="0" stop-color="#f6f4b0"/><stop offset="1" stop-color="#d6d43a"/></linearGradient></defs><path d="M0.5 1h2.6l.7.8h3.8v4.9H0.5z" fill="url(#fg)" stroke="#4a4a30" stroke-width=".6"/><rect x="5" y="3.6" width="3" height="3.4" fill="#1a1a1a"/><rect x="5.7" y="2.6" width="1.6" height="1.4" fill="none" stroke="#1a1a1a" stroke-width=".5"/><rect x="5.9" y="5.6" width="1.2" height="1" fill="#6a2a6a"/></svg>
<div class="t" style="left:511.5px;top:278.17px;height:10px;line-height:10px;font-size:6.88px;color:#111;font-weight:bold;transform:scaleX(0.8094);">SAMPLES</div>
<div style="left:504.7px;top:291.444px;width:6px;height:0.6px;background:#d8d8d8;"></div>
<svg style="left:512.2px;top:287.244px;" width="7" height="8.6" viewBox="0 0 7 8.6"><rect x="1.2" y="2" width="2.3" height="6" fill="#fff" stroke="#111" stroke-width=".7"/><path d="M1.2 4h2.3M1.2 6h2.3" stroke="#111" stroke-width=".6"/><rect x="1.8" y="0.9" width="1.1" height="1.1" fill="#111"/><path d="M4.2 1.4c.8-1 2-.2 1 .8c-.4.4-.4.6-.4 1" fill="none" stroke="#b8cc2a" stroke-width=".8"/></svg>
<div class="t" style="left:521.4px;top:287.54px;height:10px;line-height:10px;font-size:6.88px;color:#222;transform:scaleX(0.9103);">[*] New Legend</div>
<div style="left:504.5px;top:286.26800000000003px;width:0.6px;height:5.375999999999976px;background:#d8d8d8;"></div>
<svg style="left:492.2px;top:298.21999999999997px;" width="5.6" height="5.6" viewBox="0 0 5.6 5.6"><circle cx="2.8" cy="2.8" r="2.6" fill="#d2d2d2"/><path d="M1.3 2.8h3" stroke="#fff" stroke-width=".9"/></svg>
<div style="left:497.3px;top:300.82px;width:3px;height:0.6px;background:#d8d8d8;"></div>
<svg style="left:500.2px;top:297.32px;" width="8.4" height="7.4" viewBox="0 0 8.4 7.4"><defs><linearGradient id="fg" x1="0" y1="0" x2="0" y2="1"><stop offset="0" stop-color="#f6f4b0"/><stop offset="1" stop-color="#d6d43a"/></linearGradient></defs><path d="M0.5 1h2.6l.7.8h3.8v4.9H0.5z" fill="url(#fg)" stroke="#4a4a30" stroke-width=".6"/><rect x="5" y="3.6" width="3" height="3.4" fill="#1a1a1a"/><rect x="5.7" y="2.6" width="1.6" height="1.4" fill="none" stroke="#1a1a1a" stroke-width=".5"/><rect x="5.9" y="5.6" width="1.2" height="1" fill="#6a2a6a"/></svg>
<div class="t" style="left:511.5px;top:296.92px;height:10px;line-height:10px;font-size:6.88px;color:#111;font-weight:bold;transform:scaleX(0.7550);">SCALE</div>
<div style="left:504.7px;top:310.19599999999997px;width:6px;height:0.6px;background:#d8d8d8;"></div>
<svg style="left:512.2px;top:305.996px;" width="7" height="8.6" viewBox="0 0 7 8.6"><rect x="1.2" y="2" width="2.3" height="6" fill="#fff" stroke="#111" stroke-width=".7"/><path d="M1.2 4h2.3M1.2 6h2.3" stroke="#111" stroke-width=".6"/><rect x="1.8" y="0.9" width="1.1" height="1.1" fill="#111"/><path d="M4.2 1.4c.8-1 2-.2 1 .8c-.4.4-.4.6-.4 1" fill="none" stroke="#b8cc2a" stroke-width=".8"/></svg>
<div class="t" style="left:521.4px;top:306.30px;height:10px;line-height:10px;font-size:6.88px;color:#222;transform:scaleX(0.9103);">[*] New Legend</div>
<div style="left:504.5px;top:305.02px;width:0.6px;height:5.375999999999976px;background:#d8d8d8;"></div>
<svg style="left:492.2px;top:316.972px;" width="5.6" height="5.6" viewBox="0 0 5.6 5.6"><circle cx="2.8" cy="2.8" r="2.6" fill="#d2d2d2"/><path d="M1.3 2.8h3" stroke="#fff" stroke-width=".9"/></svg>
<div style="left:497.3px;top:319.572px;width:3px;height:0.6px;background:#d8d8d8;"></div>
<svg style="left:500.2px;top:316.072px;" width="8.4" height="7.4" viewBox="0 0 8.4 7.4"><defs><linearGradient id="fg" x1="0" y1="0" x2="0" y2="1"><stop offset="0" stop-color="#f6f4b0"/><stop offset="1" stop-color="#d6d43a"/></linearGradient></defs><path d="M0.5 1h2.6l.7.8h3.8v4.9H0.5z" fill="url(#fg)" stroke="#4a4a30" stroke-width=".6"/><rect x="5" y="3.6" width="3" height="3.4" fill="#1a1a1a"/><rect x="5.7" y="2.6" width="1.6" height="1.4" fill="none" stroke="#1a1a1a" stroke-width=".5"/><rect x="5.9" y="5.6" width="1.2" height="1" fill="#6a2a6a"/></svg>
<div class="t" style="left:511.5px;top:315.67px;height:10px;line-height:10px;font-size:6.88px;color:#111;font-weight:bold;transform:scaleX(0.8486);">SEISMIC</div>
<div style="left:504.7px;top:328.94800000000004px;width:6px;height:0.6px;background:#d8d8d8;"></div>
<svg style="left:512.2px;top:324.74800000000005px;" width="7" height="8.6" viewBox="0 0 7 8.6"><rect x="1.2" y="2" width="2.3" height="6" fill="#fff" stroke="#111" stroke-width=".7"/><path d="M1.2 4h2.3M1.2 6h2.3" stroke="#111" stroke-width=".6"/><rect x="1.8" y="0.9" width="1.1" height="1.1" fill="#111"/><path d="M4.2 1.4c.8-1 2-.2 1 .8c-.4.4-.4.6-.4 1" fill="none" stroke="#b8cc2a" stroke-width=".8"/></svg>
<div class="t" style="left:521.4px;top:325.05px;height:10px;line-height:10px;font-size:6.88px;color:#222;transform:scaleX(0.9103);">[*] New Legend</div>
<div style="left:504.5px;top:323.772px;width:0.6px;height:5.376000000000033px;background:#d8d8d8;"></div>
<svg style="left:492.2px;top:335.724px;" width="5.6" height="5.6" viewBox="0 0 5.6 5.6"><circle cx="2.8" cy="2.8" r="2.6" fill="#d2d2d2"/><path d="M1.3 2.8h3" stroke="#fff" stroke-width=".9"/></svg>
<div style="left:497.3px;top:338.324px;width:3px;height:0.6px;background:#d8d8d8;"></div>
<svg style="left:500.2px;top:334.824px;" width="8.4" height="7.4" viewBox="0 0 8.4 7.4"><defs><linearGradient id="fg" x1="0" y1="0" x2="0" y2="1"><stop offset="0" stop-color="#f6f4b0"/><stop offset="1" stop-color="#d6d43a"/></linearGradient></defs><path d="M0.5 1h2.6l.7.8h3.8v4.9H0.5z" fill="url(#fg)" stroke="#4a4a30" stroke-width=".6"/><rect x="5" y="3.6" width="3" height="3.4" fill="#1a1a1a"/><rect x="5.7" y="2.6" width="1.6" height="1.4" fill="none" stroke="#1a1a1a" stroke-width=".5"/><rect x="5.9" y="5.6" width="1.2" height="1" fill="#6a2a6a"/></svg>
<div class="t" style="left:511.5px;top:334.42px;height:10px;line-height:10px;font-size:6.88px;color:#111;font-weight:bold;transform:scaleX(0.7726);">SHAPE</div>
<div style="left:504.7px;top:347.7px;width:6px;height:0.6px;background:#d8d8d8;"></div>
<svg style="left:512.2px;top:343.5px;" width="7" height="8.6" viewBox="0 0 7 8.6"><rect x="1.2" y="2" width="2.3" height="6" fill="#fff" stroke="#111" stroke-width=".7"/><path d="M1.2 4h2.3M1.2 6h2.3" stroke="#111" stroke-width=".6"/><rect x="1.8" y="0.9" width="1.1" height="1.1" fill="#111"/><path d="M4.2 1.4c.8-1 2-.2 1 .8c-.4.4-.4.6-.4 1" fill="none" stroke="#b8cc2a" stroke-width=".8"/></svg>
<div class="t" style="left:521.4px;top:343.80px;height:10px;line-height:10px;font-size:6.88px;color:#222;transform:scaleX(0.9103);">[*] New Legend</div>
<div style="left:504.5px;top:342.524px;width:0.6px;height:5.375999999999976px;background:#d8d8d8;"></div>
<svg style="left:492.2px;top:354.47599999999994px;" width="5.6" height="5.6" viewBox="0 0 5.6 5.6"><circle cx="2.8" cy="2.8" r="2.6" fill="#d2d2d2"/><path d="M1.3 2.8h3" stroke="#fff" stroke-width=".9"/></svg>
<div style="left:497.3px;top:357.07599999999996px;width:3px;height:0.6px;background:#d8d8d8;"></div>
<svg style="left:500.2px;top:353.57599999999996px;" width="8.4" height="7.4" viewBox="0 0 8.4 7.4"><defs><linearGradient id="fg" x1="0" y1="0" x2="0" y2="1"><stop offset="0" stop-color="#f6f4b0"/><stop offset="1" stop-color="#d6d43a"/></linearGradient></defs><path d="M0.5 1h2.6l.7.8h3.8v4.9H0.5z" fill="url(#fg)" stroke="#4a4a30" stroke-width=".6"/><rect x="5" y="3.6" width="3" height="3.4" fill="#1a1a1a"/><rect x="5.7" y="2.6" width="1.6" height="1.4" fill="none" stroke="#1a1a1a" stroke-width=".5"/><rect x="5.9" y="5.6" width="1.2" height="1" fill="#6a2a6a"/></svg>
<div class="t" style="left:511.5px;top:353.18px;height:10px;line-height:10px;font-size:6.88px;color:#111;font-weight:bold;transform:scaleX(0.8675);">STRATA</div>
<div style="left:504.7px;top:366.452px;width:6px;height:0.6px;background:#d8d8d8;"></div>
<svg style="left:512.2px;top:362.252px;" width="7" height="8.6" viewBox="0 0 7 8.6"><rect x="1.2" y="2" width="2.3" height="6" fill="#fff" stroke="#111" stroke-width=".7"/><path d="M1.2 4h2.3M1.2 6h2.3" stroke="#111" stroke-width=".6"/><rect x="1.8" y="0.9" width="1.1" height="1.1" fill="#111"/><path d="M4.2 1.4c.8-1 2-.2 1 .8c-.4.4-.4.6-.4 1" fill="none" stroke="#b8cc2a" stroke-width=".8"/></svg>
<div class="t" style="left:521.4px;top:362.55px;height:10px;line-height:10px;font-size:6.88px;color:#222;transform:scaleX(0.9103);">[*] New Legend</div>
<div style="left:504.5px;top:361.27599999999995px;width:0.6px;height:5.376000000000033px;background:#d8d8d8;"></div>
<svg style="left:492.2px;top:373.22799999999995px;" width="5.6" height="5.6" viewBox="0 0 5.6 5.6"><circle cx="2.8" cy="2.8" r="2.6" fill="#d2d2d2"/><path d="M1.3 2.8h3" stroke="#fff" stroke-width=".9"/></svg>
<div style="left:497.3px;top:375.828px;width:3px;height:0.6px;background:#d8d8d8;"></div>
<svg style="left:500.2px;top:372.328px;" width="8.4" height="7.4" viewBox="0 0 8.4 7.4"><defs><linearGradient id="fg" x1="0" y1="0" x2="0" y2="1"><stop offset="0" stop-color="#f6f4b0"/><stop offset="1" stop-color="#d6d43a"/></linearGradient></defs><path d="M0.5 1h2.6l.7.8h3.8v4.9H0.5z" fill="url(#fg)" stroke="#4a4a30" stroke-width=".6"/><rect x="5" y="3.6" width="3" height="3.4" fill="#1a1a1a"/><rect x="5.7" y="2.6" width="1.6" height="1.4" fill="none" stroke="#1a1a1a" stroke-width=".5"/><rect x="5.9" y="5.6" width="1.2" height="1" fill="#6a2a6a"/></svg>
<div class="t" style="left:511.5px;top:371.93px;height:10px;line-height:10px;font-size:6.88px;color:#111;font-weight:bold;transform:scaleX(0.8164);">TEXTURE</div>
<div style="left:504.7px;top:385.204px;width:6px;height:0.6px;background:#d8d8d8;"></div>
<svg style="left:512.2px;top:381.004px;" width="7" height="8.6" viewBox="0 0 7 8.6"><rect x="1.2" y="2" width="2.3" height="6" fill="#fff" stroke="#111" stroke-width=".7"/><path d="M1.2 4h2.3M1.2 6h2.3" stroke="#111" stroke-width=".6"/><rect x="1.8" y="0.9" width="1.1" height="1.1" fill="#111"/><path d="M4.2 1.4c.8-1 2-.2 1 .8c-.4.4-.4.6-.4 1" fill="none" stroke="#b8cc2a" stroke-width=".8"/></svg>
<div class="t" style="left:521.4px;top:381.30px;height:10px;line-height:10px;font-size:6.88px;color:#222;transform:scaleX(0.9103);">[*] New Legend</div>
<div style="left:504.5px;top:380.02799999999996px;width:0.6px;height:5.376000000000033px;background:#d8d8d8;"></div>
<div style="left:494.5px;top:117.5px;width:0.6px;height:2.8760000000000048px;background:#d8d8d8;"></div>
<div style="left:494.5px;top:125.376px;width:0.6px;height:248.15199999999996px;background:#d8d8d8;"></div>
<div style="left:574.6px;top:114.6px;width:410.9px;height:350.4px;border:1px solid #e3e3e3;"></div>
<div style="left:577.0px;top:110.6px;width:37.8px;height:8px;background:#f0f0f0;"></div>
<div class="t" style="left:578.5px;top:110.90px;height:10px;line-height:10px;font-size:6.88px;color:#222;transform:scaleX(0.9017);">Drill Settings</div>
<div style="left:582.5px;top:126px;width:79.10000000000002px;height:30.599999999999994px;border:1px solid #e3e3e3;"></div>
<div style="left:585.0px;top:122px;width:39.4px;height:8px;background:#f0f0f0;"></div>
<div class="t" style="left:586.5px;top:122.30px;height:10px;line-height:10px;font-size:6.88px;color:#222;transform:scaleX(0.8683);">Scheme Type</div>
<svg style="left:597.0px;top:133.20000000000002px;" width="7.2" height="7.2" viewBox="0 0 7.2 7.2"><circle cx="3.6" cy="3.6" r="3" fill="#fff" stroke="#3c3c3c" stroke-width=".75"/></svg>
<div class="t" style="left:605.9px;top:132.70px;height:10px;line-height:10px;font-size:6.88px;color:#141414;transform:scaleX(0.9208);">Alpha</div>
<svg style="left:597.0px;top:143.70000000000002px;" width="7.2" height="7.2" viewBox="0 0 7.2 7.2"><circle cx="3.6" cy="3.6" r="3" fill="#fff" stroke="#3c3c3c" stroke-width=".75"/><circle cx="3.6" cy="3.6" r="1.75" fill="#1a1a1a"/></svg>
<div class="t" style="left:605.9px;top:143.20px;height:10px;line-height:10px;font-size:6.88px;color:#141414;transform:scaleX(0.9338);">Numeric</div>
<div style="left:661.6px;top:126px;width:178.5px;height:30.6px;border:1px solid #e3e3e3;border-left:none;"></div>
<div style="left:665px;top:122px;width:84px;height:8px;background:#f0f0f0;"></div>
<svg style="left:665.6px;top:124.1px;" width="7.2" height="7" viewBox="0 0 7.2 7"><rect x="0.4" y="0.4" width="6.4" height="6.2" fill="#fff" stroke="#c0c0c0" stroke-width=".75"/></svg>
<div class="t" style="left:674.7px;top:123.50px;height:10px;line-height:10px;font-size:6.88px;color:#9a9a9a;transform:scaleX(0.9031);">Use horizon list from Glob file</div>
<div class="t" style="left:676.7px;top:133.50px;height:10px;line-height:10px;font-size:6.88px;color:#a5a5a5;transform:scaleX(0.8875);">Filename</div>
<div style="left:705px;top:132.8px;width:81.29999999999995px;height:11.299999999999983px;background:#f3f3f3;border:1px solid #dcdcdc;"></div>
<svg style="left:778.3px;top:137.04999999999998px;" width="5" height="3" viewBox="0 0 5 3"><path d="M0.5 0.4L2.5 2.4L4.5 0.4" stroke="#b5b5b5" fill="none" stroke-width=".7"/></svg>
<div style="left:788.6px;top:132.8px;width:30.399999999999977px;height:11.299999999999983px;background:#cccccc;border:1px solid #bfbfbf;"></div>
<div class="t" style="left:791.1px;top:134.35px;height:10px;line-height:10px;font-size:6.88px;color:#9a9a9a;transform:scaleX(0.8208);">Browse ...</div>
<div style="left:582.5px;top:163.5px;width:257.79999999999995px;height:53.69999999999999px;border:1px solid #e3e3e3;"></div>
<div style="left:585px;top:159.5px;width:115.9px;height:8px;background:#f0f0f0;"></div>
<svg style="left:585.8px;top:160.0px;" width="7.2" height="7" viewBox="0 0 7.2 7"><rect x="0.4" y="0.4" width="6.4" height="6.2" fill="#fff" stroke="#3c3c3c" stroke-width=".75"/><path d="M1.5 3.6L3 5.1L5.7 1.8" fill="none" stroke="#222" stroke-width=".85"/></svg>
<div class="t" style="left:595px;top:159.80px;height:10px;line-height:10px;font-size:6.88px;color:#222;transform:scaleX(0.8912);">Use database to populate drop menus</div>
<svg style="left:597.0px;top:169.0px;" width="7.2" height="7.2" viewBox="0 0 7.2 7.2"><circle cx="3.6" cy="3.6" r="3" fill="#fff" stroke="#3c3c3c" stroke-width=".75"/><circle cx="3.6" cy="3.6" r="1.75" fill="#1a1a1a"/></svg>
<div class="t" style="left:605.9px;top:168.50px;height:10px;line-height:10px;font-size:6.88px;color:#141414;transform:scaleX(0.8150);">Isis File</div>
<div class="t" style="left:607px;top:179.70px;height:10px;line-height:10px;font-size:6.88px;color:#141414;transform:scaleX(0.8557);">Filename</div>
<div style="left:634.3px;top:178.6px;width:139.20000000000005px;height:11.800000000000011px;background:#fff;border:1px solid #b4b4b4;"></div>
<svg style="left:765.5px;top:183.1px;" width="5" height="3" viewBox="0 0 5 3"><path d="M0.5 0.4L2.5 2.4L4.5 0.4" stroke="#444" fill="none" stroke-width=".7"/></svg>
<div class="t" style="left:637.4px;top:180.60px;height:10px;line-height:10px;font-size:6.88px;color:#222;transform:scaleX(0.9351);">originaldrilling.dhd.isis</div>
<div style="left:775.5px;top:178.6px;width:30.100000000000023px;height:11.800000000000011px;background:#e2e2e2;border:1px solid #adadad;"></div>
<div class="t" style="left:777.7px;top:180.40px;height:10px;line-height:10px;font-size:6.88px;color:#222;transform:scaleX(0.8405);">Browse ...</div>
<svg style="left:597.0px;top:192.6px;" width="7.2" height="7.2" viewBox="0 0 7.2 7.2"><circle cx="3.6" cy="3.6" r="3" fill="#fff" stroke="#3c3c3c" stroke-width=".75"/></svg>
<div class="t" style="left:605.9px;top:192.10px;height:10px;line-height:10px;font-size:6.88px;color:#141414;transform:scaleX(0.8665);">ODBC Link</div>
<div class="t" style="left:607px;top:203.30px;height:10px;line-height:10px;font-size:6.88px;color:#a5a5a5;transform:scaleX(0.8362);">Design</div>
<div style="left:628.6px;top:201.9px;width:79.69999999999993px;height:11.199999999999989px;background:#f3f3f3;border:1px solid #dcdcdc;"></div>
<svg style="left:700.3px;top:206.1px;" width="5" height="3" viewBox="0 0 5 3"><path d="M0.5 0.4L2.5 2.4L4.5 0.4" stroke="#b5b5b5" fill="none" stroke-width=".7"/></svg>
<div style="left:582.5px;top:222.7px;width:121.39999999999998px;height:45.5px;border:1px solid #e3e3e3;"></div>
<div style="left:585.0px;top:218.7px;width:90.9px;height:8px;background:#f0f0f0;"></div>
<div class="t" style="left:586.5px;top:219.00px;height:10px;line-height:10px;font-size:6.88px;color:#222;transform:scaleX(0.8745);">Specify Record and Depth Fields</div>
<div class="t" style="left:597.6px;top:229.90px;height:10px;line-height:10px;font-size:6.88px;color:#141414;transform:scaleX(0.8782);">Record (Table)</div>
<div style="left:640.4px;top:228.3px;width:56.89999999999998px;height:12.099999999999994px;background:#fff;border:1px solid #b4b4b4;"></div>
<svg style="left:689.3px;top:232.95000000000002px;" width="5" height="3" viewBox="0 0 5 3"><path d="M0.5 0.4L2.5 2.4L4.5 0.4" stroke="#444" fill="none" stroke-width=".7"/></svg>
<div class="t" style="left:643.4px;top:230.45px;height:10px;line-height:10px;font-size:6.88px;color:#222;transform:scaleX(0.7626);">ASSAY</div>
<div class="t" style="left:597.6px;top:241.70px;height:10px;line-height:10px;font-size:6.88px;color:#141414;transform:scaleX(0.8878);">Field name</div>
<div style="left:640.4px;top:240.6px;width:56.89999999999998px;height:11.800000000000011px;background:#fff;border:1px solid #b4b4b4;"></div>
<svg style="left:689.3px;top:245.1px;" width="5" height="3" viewBox="0 0 5 3"><path d="M0.5 0.4L2.5 2.4L4.5 0.4" stroke="#444" fill="none" stroke-width=".7"/></svg>
<div class="t" style="left:643.4px;top:242.60px;height:10px;line-height:10px;font-size:6.88px;color:#222;transform:scaleX(0.8052);">AU</div>
<div class="t" style="left:597.6px;top:253.50px;height:10px;line-height:10px;font-size:6.88px;color:#141414;transform:scaleX(0.8946);">To</div>
<div style="left:640.4px;top:252.7px;width:56.89999999999998px;height:11.800000000000011px;background:#fff;border:1px solid #b4b4b4;"></div>
<svg style="left:689.3px;top:257.20000000000005px;" width="5" height="3" viewBox="0 0 5 3"><path d="M0.5 0.4L2.5 2.4L4.5 0.4" stroke="#444" fill="none" stroke-width=".7"/></svg>
<div class="t" style="left:643.4px;top:254.70px;height:10px;line-height:10px;font-size:6.88px;color:#222;transform:scaleX(0.7629);">TO</div>
<div style="left:706.4px;top:222.7px;width:133.89999999999998px;height:45.5px;border:1px solid #e3e3e3;"></div>
<div style="left:706.8px;top:218.7px;width:73.8px;height:8px;background:#f0f0f0;"></div>
<svg style="left:707.5999999999999px;top:219.2px;" width="7.2" height="7" viewBox="0 0 7.2 7"><rect x="0.4" y="0.4" width="6.4" height="6.2" fill="#fff" stroke="#3c3c3c" stroke-width=".75"/><path d="M1.5 3.6L3 5.1L5.7 1.8" fill="none" stroke="#222" stroke-width=".85"/></svg>
<div class="t" style="left:716.8px;top:219.00px;height:10px;line-height:10px;font-size:6.88px;color:#222;transform:scaleX(0.8712);">Use From or Thickness</div>
<svg style="left:718.6999999999999px;top:231.0px;" width="7.2" height="7.2" viewBox="0 0 7.2 7.2"><circle cx="3.6" cy="3.6" r="3" fill="#fff" stroke="#3c3c3c" stroke-width=".75"/><circle cx="3.6" cy="3.6" r="1.75" fill="#1a1a1a"/></svg>
<div class="t" style="left:727.7px;top:230.50px;height:10px;line-height:10px;font-size:6.88px;color:#141414;transform:scaleX(0.8580);">Use From</div>
<div style="left:764.3px;top:229px;width:56.90000000000009px;height:11.199999999999989px;background:#fff;border:1px solid #b4b4b4;"></div>
<svg style="left:813.2px;top:233.2px;" width="5" height="3" viewBox="0 0 5 3"><path d="M0.5 0.4L2.5 2.4L4.5 0.4" stroke="#444" fill="none" stroke-width=".7"/></svg>
<div class="t" style="left:767.8px;top:230.70px;height:10px;line-height:10px;font-size:6.88px;color:#222;transform:scaleX(0.8444);">FROM</div>
<svg style="left:718.6999999999999px;top:243.1px;" width="7.2" height="7.2" viewBox="0 0 7.2 7.2"><circle cx="3.6" cy="3.6" r="3" fill="#fff" stroke="#3c3c3c" stroke-width=".75"/></svg>
<div class="t" style="left:727.7px;top:242.60px;height:10px;line-height:10px;font-size:6.88px;color:#141414;transform:scaleX(0.8539);">Use Thickness</div>
<div style="left:777.2px;top:241.6px;width:56.0px;height:10.599999999999994px;background:#f3f3f3;border:1px solid #dcdcdc;"></div>
<svg style="left:825.2px;top:245.49999999999997px;" width="5" height="3" viewBox="0 0 5 3"><path d="M0.5 0.4L2.5 2.4L4.5 0.4" stroke="#b5b5b5" fill="none" stroke-width=".7"/></svg>
<div style="left:582.5px;top:273.8px;width:177.5px;height:56.099999999999966px;border:1px solid #e3e3e3;"></div>
<div style="left:763.2px;top:273.8px;width:77.09999999999991px;height:56.099999999999966px;border:1px solid #e3e3e3;"></div>
<div style="left:765.4px;top:269.8px;width:38px;height:8px;background:#f0f0f0;"></div>
<div class="t" style="left:766.9px;top:270.10px;height:10px;line-height:10px;font-size:6.88px;color:#222;transform:scaleX(0.8889);">Range Mode</div>
<div style="left:582.5px;top:268.5px;width:154px;height:59.4px;border:2px solid #e9843a;"></div>
<div style="left:585.5px;top:270.8px;width:30px;height:7px;background:#f0f0f0;"></div>
<div class="t" style="left:586.8px;top:269.80px;height:10px;line-height:10px;font-size:6.88px;color:#141414;transform:scaleX(0.8174);">Data Range</div>
<svg style="left:610.9px;top:281.5px;" width="7.2" height="7" viewBox="0 0 7.2 7"><rect x="0.4" y="0.4" width="6.4" height="6.2" fill="#fff" stroke="#3c3c3c" stroke-width=".75"/><path d="M1.5 3.6L3 5.1L5.7 1.8" fill="none" stroke="#222" stroke-width=".85"/></svg>
<div class="t" style="left:619.8px;top:280.90px;height:10px;line-height:10px;font-size:6.88px;color:#141414;transform:scaleX(0.9213);">Ignore number</div>
<div style="left:672.2px;top:280px;width:59.39999999999998px;height:10.699999999999989px;background:#fff;border:1px solid #b2b2b2;"></div>
<div class="t" style="left:675px;top:281.45px;height:10px;line-height:10px;font-size:6.88px;color:#222;transform:scaleX(0.8933);">-99.0</div>
<div class="t" style="left:588.2px;top:292.30px;height:10px;line-height:10px;font-size:6.88px;color:#141414;transform:scaleX(0.9568);">Min</div>
<div style="left:610.9px;top:291.1px;width:59.39999999999998px;height:11.199999999999989px;background:#fff;border:1px solid #b2b2b2;"></div>
<div class="t" style="left:614px;top:292.80px;height:10px;line-height:10px;font-size:6.88px;color:#222;transform:scaleX(0.7916);">0.01</div>
<div class="t" style="left:588.2px;top:303.80px;height:10px;line-height:10px;font-size:6.88px;color:#141414;transform:scaleX(0.8846);">Max</div>
<div style="left:610.9px;top:302.5px;width:59.39999999999998px;height:11.300000000000011px;background:#fff;border:1px solid #b2b2b2;"></div>
<div class="t" style="left:614px;top:304.25px;height:10px;line-height:10px;font-size:6.88px;color:#222;transform:scaleX(0.8157);">2.3</div>
<div class="t" style="left:588.2px;top:315.30px;height:10px;line-height:10px;font-size:6.88px;color:#141414;transform:scaleX(0.8826);">Interval</div>
<div style="left:610.9px;top:314px;width:59.39999999999998px;height:11.399999999999977px;background:#fff;border:1px solid #b2b2b2;"></div>
<div class="t" style="left:614px;top:315.80px;height:10px;line-height:10px;font-size:6.88px;color:#222;transform:scaleX(0.8157);">0.5</div>
<div style="left:683.1px;top:297.4px;width:44.799999999999955px;height:11.700000000000045px;background:#e2e2e2;border:1px solid #adadad;"></div>
<div class="t" style="left:691.8px;top:299.15px;height:10px;line-height:10px;font-size:6.88px;color:#222;transform:scaleX(0.8417);">Get Range</div>
<div style="left:768.3px;top:280px;width:40.30000000000007px;height:11.199999999999989px;background:#e1e1e1;border:1px solid #b4b4b4;"></div>
<svg style="left:800.6px;top:284.20000000000005px;" width="5" height="3" viewBox="0 0 5 3"><path d="M0.5 0.4L2.5 2.4L4.5 0.4" stroke="#444" fill="none" stroke-width=".7"/></svg>
<div class="t" style="left:771px;top:281.70px;height:10px;line-height:10px;font-size:6.88px;color:#222;transform:scaleX(0.7563);">GELT</div>
<div style="left:845.5px;top:126px;width:132.0px;height:332.4px;border:1px solid #e3e3e3;"></div>
<div style="left:848.6px;top:122px;width:43.1px;height:8px;background:#f0f0f0;"></div>
<div class="t" style="left:850.1px;top:122.30px;height:10px;line-height:10px;font-size:6.88px;color:#222;transform:scaleX(0.8744);">Colour Ranges</div>
<div style="left:852.1px;top:133.1px;width:119.60000000000002px;height:292.29999999999995px;background:#fff;border:1px solid #d4d4d4;border-top-color:#bdbdbd;border-left-color:#c6c6c6;"></div>
<div style="left:853px;top:134.1px;width:118px;height:8.5px;background:#f0f0f0;"></div>
<div style="left:853px;top:134.1px;width:8.399999999999977px;height:290.5px;background:#f0f0f0;"></div>
<div class="t" style="left:873.6px;top:133.60px;height:10px;line-height:10px;font-size:6.88px;color:#111;font-weight:bold;transform:scaleX(0.8611);">From</div>
<div class="t" style="left:916.3px;top:133.60px;height:10px;line-height:10px;font-size:6.88px;color:#111;font-weight:bold;transform:scaleX(0.8618);">To</div>
<div class="t" style="left:941px;top:133.60px;height:10px;line-height:10px;font-size:6.88px;color:#111;font-weight:bold;transform:scaleX(0.8395);">Colour</div>
<div style="left:860.9px;top:133.1px;width:1px;height:78.32000000000002px;background:#dadada;"></div>
<div style="left:900.0px;top:133.1px;width:1px;height:78.32000000000002px;background:#dadada;"></div>
<div style="left:939.1px;top:133.1px;width:1px;height:78.32000000000002px;background:#dadada;"></div>
<div style="left:960.1px;top:133.1px;width:1px;height:78.32000000000002px;background:#dadada;"></div>
<div style="left:852.1px;top:142.1px;width:108.5px;height:1px;background:#dadada;"></div>
<div style="left:852.1px;top:153.57px;width:108.5px;height:1px;background:#dadada;"></div>
<div style="left:852.1px;top:165.04px;width:108.5px;height:1px;background:#dadada;"></div>
<div style="left:852.1px;top:176.51px;width:108.5px;height:1px;background:#dadada;"></div>
<div style="left:852.1px;top:187.98px;width:108.5px;height:1px;background:#dadada;"></div>
<div style="left:852.1px;top:199.45px;width:108.5px;height:1px;background:#dadada;"></div>
<div style="left:852.1px;top:210.92000000000002px;width:108.5px;height:1px;background:#dadada;"></div>
<div class="t" style="left:852.1px;top:144.83px;height:10px;line-height:10px;font-size:6.99px;color:#111;font-weight:bold;width:9.299999999999955px;text-align:center;transform:scaleX(0.885);transform-origin:50% 50%;">1</div>
<div class="t" style="left:888.0px;top:144.83px;height:10px;line-height:10px;font-size:6.88px;color:#222;transform:scaleX(0.8065);">0.01</div>
<div class="t" style="left:927.1px;top:144.83px;height:10px;line-height:10px;font-size:6.88px;color:#222;transform:scaleX(0.8065);">0.51</div>
<div style="left:941.0px;top:144.1px;width:18.0px;height:9.07px;background:#bfbfbf;"></div>
<svg style="left:941.0px;top:144.1px;" width="18.0" height="9.07" viewBox="0 0 18.0 9.07"><path d="M0 0L18.0 9.07M18.0 0L0 9.07" stroke="#222" stroke-width=".7"/></svg>
<div class="t" style="left:852.1px;top:156.31px;height:10px;line-height:10px;font-size:6.99px;color:#111;font-weight:bold;width:9.299999999999955px;text-align:center;transform:scaleX(0.885);transform-origin:50% 50%;">2</div>
<div class="t" style="left:888.0px;top:156.31px;height:10px;line-height:10px;font-size:6.88px;color:#222;transform:scaleX(0.8065);">0.51</div>
<div class="t" style="left:927.1px;top:156.31px;height:10px;line-height:10px;font-size:6.88px;color:#222;transform:scaleX(0.8065);">1.01</div>
<div style="left:941.0px;top:155.57px;width:18.0px;height:9.07px;background:#bfbfbf;"></div>
<svg style="left:941.0px;top:155.57px;" width="18.0" height="9.07" viewBox="0 0 18.0 9.07"><path d="M0 0L18.0 9.07M18.0 0L0 9.07" stroke="#222" stroke-width=".7"/></svg>
<div class="t" style="left:852.1px;top:167.77px;height:10px;line-height:10px;font-size:6.99px;color:#111;font-weight:bold;width:9.299999999999955px;text-align:center;transform:scaleX(0.885);transform-origin:50% 50%;">3</div>
<div class="t" style="left:888.0px;top:167.77px;height:10px;line-height:10px;font-size:6.88px;color:#222;transform:scaleX(0.8065);">1.01</div>
<div class="t" style="left:927.1px;top:167.77px;height:10px;line-height:10px;font-size:6.88px;color:#222;transform:scaleX(0.8065);">1.51</div>
<div style="left:941.0px;top:167.04px;width:18.0px;height:9.07px;background:#bfbfbf;"></div>
<svg style="left:941.0px;top:167.04px;" width="18.0" height="9.07" viewBox="0 0 18.0 9.07"><path d="M0 0L18.0 9.07M18.0 0L0 9.07" stroke="#222" stroke-width=".7"/></svg>
<div class="t" style="left:852.1px;top:179.25px;height:10px;line-height:10px;font-size:6.99px;color:#111;font-weight:bold;width:9.299999999999955px;text-align:center;transform:scaleX(0.885);transform-origin:50% 50%;">4</div>
<div class="t" style="left:888.0px;top:179.25px;height:10px;line-height:10px;font-size:6.88px;color:#222;transform:scaleX(0.8065);">1.51</div>
<div class="t" style="left:927.1px;top:179.25px;height:10px;line-height:10px;font-size:6.88px;color:#222;transform:scaleX(0.8065);">2.01</div>
<div style="left:941.0px;top:178.51px;width:18.0px;height:9.07px;background:#bfbfbf;"></div>
<svg style="left:941.0px;top:178.51px;" width="18.0" height="9.07" viewBox="0 0 18.0 9.07"><path d="M0 0L18.0 9.07M18.0 0L0 9.07" stroke="#222" stroke-width=".7"/></svg>
<div class="t" style="left:852.1px;top:190.71px;height:10px;line-height:10px;font-size:6.99px;color:#111;font-weight:bold;width:9.299999999999955px;text-align:center;transform:scaleX(0.885);transform-origin:50% 50%;">5</div>
<div class="t" style="left:888.0px;top:190.71px;height:10px;line-height:10px;font-size:6.88px;color:#222;transform:scaleX(0.8065);">2.01</div>
<div class="t" style="left:927.1px;top:190.71px;height:10px;line-height:10px;font-size:6.88px;color:#222;transform:scaleX(0.8065);">2.51</div>
<div style="left:941.0px;top:189.98px;width:18.0px;height:9.07px;background:#bfbfbf;"></div>
<svg style="left:941.0px;top:189.98px;" width="18.0" height="9.07" viewBox="0 0 18.0 9.07"><path d="M0 0L18.0 9.07M18.0 0L0 9.07" stroke="#222" stroke-width=".7"/></svg>
<div class="t" style="left:852.1px;top:202.19px;height:10px;line-height:10px;font-size:6.99px;color:#111;font-weight:bold;width:9.299999999999955px;text-align:center;transform:scaleX(0.885);transform-origin:50% 50%;">*</div>
<div style="left:941.0px;top:201.45px;width:18.0px;height:9.07px;background:#bfbfbf;"></div>
<svg style="left:941.0px;top:201.45px;" width="18.0" height="9.07" viewBox="0 0 18.0 9.07"><path d="M0 0L18.0 9.07M18.0 0L0 9.07" stroke="#222" stroke-width=".7"/></svg>
<div style="left:971px;top:425px;width:0.8px;height:10.5px;background:#b0b0b0;"></div>
<svg style="left:851px;top:427.2px;" width="7.2" height="7" viewBox="0 0 7.2 7"><rect x="0.4" y="0.4" width="6.4" height="6.2" fill="#fff" stroke="#3c3c3c" stroke-width=".75"/></svg>
<div class="t" style="left:859.9px;top:426.60px;height:10px;line-height:10px;font-size:6.88px;color:#141414;transform:scaleX(0.9056);">Null values and nonlogged intervals</div>
<div style="left:855.3px;top:441.8px;width:65.5px;height:11.699999999999989px;background:#e2e2e2;border:1px solid #adadad;"></div>
<div class="t" style="left:859.7px;top:443.55px;height:10px;line-height:10px;font-size:6.88px;color:#222;transform:scaleX(0.9007);">Build Colour Ranges</div>
</div></body></html>
